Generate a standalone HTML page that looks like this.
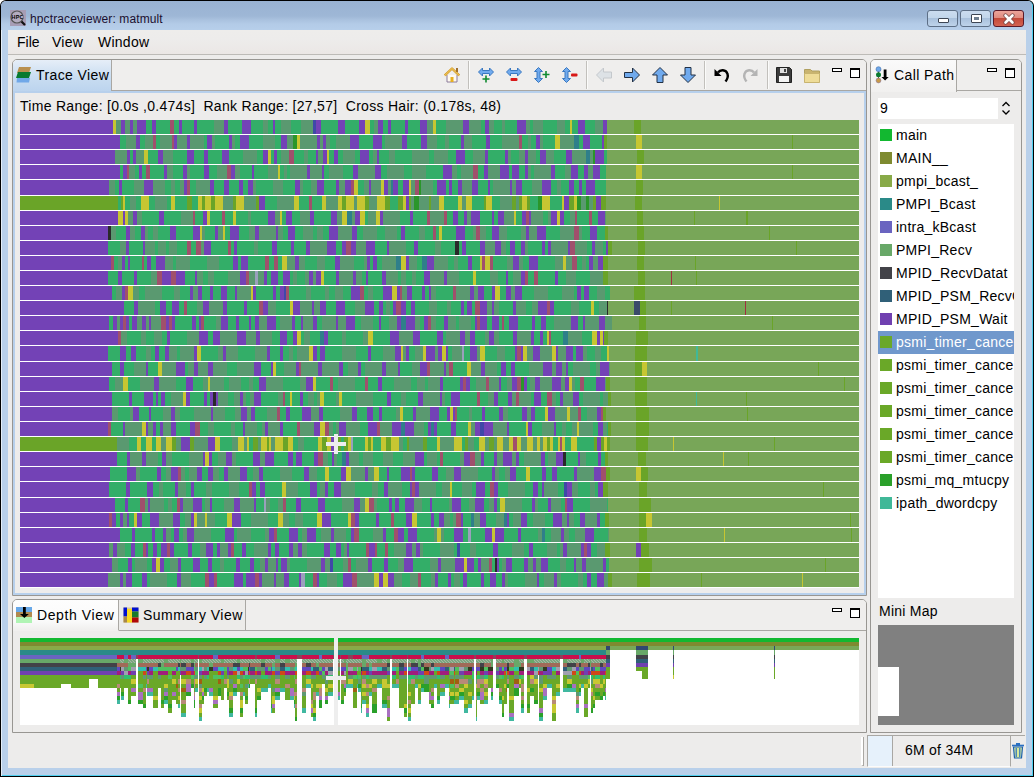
<!DOCTYPE html>
<html><head><meta charset="utf-8">
<style>
*{margin:0;padding:0;box-sizing:border-box}
html,body{width:1034px;height:777px;overflow:hidden;background:#fff}
body{position:relative;font-family:"Liberation Sans",sans-serif;font-size:14px;letter-spacing:0.25px;color:#000}
.a{position:absolute}
.t{position:absolute;white-space:pre;line-height:16px}
svg{display:block}
#win{left:0;top:0;width:1034px;height:777px;background:#000;border-radius:6px 6px 0 0}
#frame{left:1px;top:1px;width:1032px;height:775px;background:#b9d0ea;border-radius:5px 5px 0 0;border-right:1px solid #4fd0f0;border-bottom:1px solid #4fd0f0}
#title{left:1px;top:1px;width:1031px;height:29px;border-radius:5px 5px 0 0;background:linear-gradient(#99b2d2 0px,#9eb7d6 15px,#aac2df 19px,#b3cbe7 23px,#b7cfea 29px)}
#content{left:8px;top:30px;width:1018px;height:738px;background:#edeceb}
#menubar{left:8px;top:30px;width:1018px;height:25px;background:linear-gradient(#eeedeb,#edeceb 40%,#ebe7e5);border-bottom:1px solid #bdbbb7}
.wb{position:absolute;top:10px;height:17px;border:1px solid #5d6f86;border-radius:3px;background:linear-gradient(#cbdcef 0%,#c2d6eb 45%,#a9c1dc 50%,#bed3ea 100%)}
.panel{position:absolute;border:1px solid #989692;border-radius:5px 5px 0 0;background:#edeceb}
.tab{position:absolute;border-right:1px solid #a9a7a3;border-radius:5px 0 0 0}
.sep{position:absolute;top:61px;width:2px;height:28px;border-left:1px solid #c2c0bc;border-right:1px solid #fbfbfa}
.ic{position:absolute;top:67px}
.li{position:absolute;left:880px;width:12px;height:12px}
.lt{position:absolute;left:896px;white-space:pre;line-height:16px}
</style></head><body>
<div id="win" class="a"></div>
<div id="frame" class="a"></div>
<div class="a" style="left:1px;top:8px;width:1px;height:768px;background:#e4eef8"></div>
<div id="title" class="a"></div>
<!-- HPC icon -->
<svg class="a" style="left:10px;top:10px" width="16" height="16" viewBox="0 0 16 16">
<rect x="0" y="0" width="16" height="16" fill="#a79db5"/>
<circle cx="7" cy="7" r="6" fill="#b4acc0" stroke="#555" stroke-width="1.2"/>
<rect x="2" y="5" width="11" height="4" fill="#b4acc0"/>
<text x="1.6" y="9" font-family="Liberation Sans" font-weight="bold" font-size="5.4" fill="#000" letter-spacing="0.2">HPC</text>
<path d="M11.5 11.5l3.5 3.5" stroke="#111" stroke-width="2.2"/>
</svg>
<div class="t" style="left:30px;top:11px;font-size:12px;letter-spacing:0.12px;color:#1c1030">hpctraceviewer: matmult</div>
<div class="wb" style="left:927px;width:31px"><div class="a" style="left:10px;top:7px;width:11px;height:5px;background:#fff;border:1px solid #3d4654;border-radius:1px"></div></div>
<div class="wb" style="left:960px;width:31px"><div class="a" style="left:10px;top:3px;width:11px;height:9px;background:#fff;border:1px solid #3d4654;border-radius:1px"></div><div class="a" style="left:13px;top:6px;width:5px;height:3px;background:#6f7f90"></div></div>
<div class="wb" style="left:993px;width:31px;border-color:#5a1a28;background:linear-gradient(#eca49a 0%,#e08c80 45%,#c44a3a 50%,#d46452 100%)">
<svg class="a" style="left:8px;top:2px" width="14" height="12" viewBox="0 0 14 12"><path d="M3.5 2.5L10.5 9.5M10.5 2.5L3.5 9.5" stroke="#7a4a48" stroke-width="4.2" stroke-linecap="round"/><path d="M3.5 2.5L10.5 9.5M10.5 2.5L3.5 9.5" stroke="#fff" stroke-width="2.6" stroke-linecap="round"/></svg></div>

<div id="content" class="a"></div>
<div id="menubar" class="a"></div>
<div class="t" style="left:17px;top:34px;letter-spacing:0">File</div>
<div class="t" style="left:52px;top:34px">View</div>
<div class="t" style="left:98px;top:34px">Window</div>

<!-- TRACE PANEL -->
<div class="panel" style="left:12px;top:59px;width:855px;height:537px"></div>
<div class="a" style="left:13px;top:60px;width:853px;height:31px;background:#efeeed;border-bottom:1px solid #a9a7a3;border-radius:4px 4px 0 0"></div>
<div class="tab" style="left:13px;top:60px;width:99px;height:31px;background:linear-gradient(#e6eef8,#c9ddf1 55%,#bcd4ee)"></div>
<svg class="a" style="left:16px;top:67px" width="16" height="16" viewBox="0 0 16 16">
<path d="M3 0h12l-2 6H1z" fill="#b89050"/>
<path d="M2 5h13l-2 6H0z" fill="#087a30"/>
<path d="M1 11h13l-1 4.5H0.5z" fill="#70a8e8"/>
</svg>
<div class="t" style="left:36px;top:67px;letter-spacing:0.4px">Trace View</div>
<!-- toolbar -->
<svg class="ic" style="left:444px" width="16" height="16" viewBox="0 0 16 16">
<path d="M3 8v7h10V8" fill="#fffaf0" stroke="#8a7a9a" stroke-width="1"/>
<path d="M0.8 8.5L8 1.5l7.2 7" fill="none" stroke="#d49a20" stroke-width="2.4" stroke-linejoin="round"/>
<path d="M0.8 8.5L8 1.5l7.2 7" fill="none" stroke="#f4d070" stroke-width="1"/>
<rect x="12" y="1" width="2" height="4" fill="#a07030"/>
<rect x="6.5" y="10" width="3" height="5" fill="#e8b020"/>
</svg>
<div class="sep" style="left:468px"></div>
<svg class="ic" style="left:478px" width="16" height="16" viewBox="0 0 16 16">
<path d="M0.5 5L4.5 1v2.5h7V1l4 4-4 4V6.5h-7V9z" fill="#70aaee" stroke="#3a78c0" stroke-width="1"/>
<path d="M8 8.5v7M4.5 12h7" stroke="#108a30" stroke-width="1.6"/>
</svg>
<svg class="ic" style="left:506px" width="16" height="16" viewBox="0 0 16 16">
<path d="M0.5 5L4.5 1v2.5h7V1l4 4-4 4V6.5h-7V9z" fill="#70aaee" stroke="#3a78c0" stroke-width="1"/>
<rect x="4.5" y="11" width="7" height="3" rx="1" fill="#d81818"/>
</svg>
<svg class="ic" style="left:534px" width="16" height="16" viewBox="0 0 16 16">
<path d="M4.5 0.5L8.5 4.5H6v7h2.5l-4 4-4-4H3v-7H0.5z" fill="#70aaee" stroke="#3a78c0" stroke-width="1"/>
<path d="M12 4v7M8.5 7.5h7" stroke="#108a30" stroke-width="1.6"/>
</svg>
<svg class="ic" style="left:562px" width="16" height="16" viewBox="0 0 16 16">
<path d="M4.5 0.5L8.5 4.5H6v7h2.5l-4 4-4-4H3v-7H0.5z" fill="#70aaee" stroke="#3a78c0" stroke-width="1"/>
<rect x="9" y="6.5" width="6.5" height="3" rx="1" fill="#d81818"/>
</svg>
<div class="sep" style="left:586px"></div>
<svg class="ic" style="left:596px" width="16" height="16" viewBox="0 0 16 16">
<path d="M0.5 8L7.5 1v4h8v6h-8v4z" fill="#dde2e6" stroke="#c4c8cc" stroke-width="1"/>
</svg>
<svg class="ic" style="left:624px" width="16" height="16" viewBox="0 0 16 16">
<path d="M15.5 8L8.5 1v4.5h-8v5h8v4.5z" fill="#70aaee" stroke="#223044" stroke-width="1"/>
</svg>
<svg class="ic" style="left:652px" width="16" height="16" viewBox="0 0 16 16">
<path d="M8 0.5L15.5 8H11v7.5H5V8H0.5z" fill="#70aaee" stroke="#223044" stroke-width="1"/>
</svg>
<svg class="ic" style="left:680px" width="16" height="16" viewBox="0 0 16 16">
<path d="M8 15.5L15.5 8H11V0.5H5V8H0.5z" fill="#70aaee" stroke="#223044" stroke-width="1"/>
</svg>
<div class="sep" style="left:704px"></div>
<svg class="ic" style="left:714px" width="16" height="16" viewBox="0 0 16 16">
<path d="M4 5.5c2-3 8-3.5 9.5 1.5c1 3-0.5 5.5-2 7.5" fill="none" stroke="#000" stroke-width="2.4"/>
<path d="M0.5 2v7h7z" fill="#000"/>
</svg>
<svg class="ic" style="left:742px" width="16" height="16" viewBox="0 0 16 16">
<path d="M12 5.5c-2-3-8-3.5-9.5 1.5c-1 3 0.5 5.5 2 7.5" fill="none" stroke="#b4b4b4" stroke-width="2.4"/>
<path d="M15.5 2v7h-7z" fill="#b4b4b4"/>
</svg>
<div class="sep" style="left:767px"></div>
<svg class="ic" style="left:776px" width="16" height="16" viewBox="0 0 16 16">
<path d="M0.5 0.5h13l2 2v13h-15z" fill="#3c3c3c" stroke="#222" stroke-width="1"/>
<rect x="4" y="1" width="7" height="5" fill="#e0e0e0"/><rect x="8" y="2" width="2" height="3" fill="#444"/>
<rect x="3" y="9" width="10" height="6" fill="#f4f4f4"/>
</svg>
<svg class="ic" style="left:804px" width="16" height="16" viewBox="0 0 16 16">
<path d="M0.5 2.5h6l1.5 1.5h7.5v11h-15z" fill="#c9b470" stroke="#b0a060" stroke-width="1"/>
<path d="M0.5 6.5h15v9h-15z" fill="#eedc98" stroke="#c8b470" stroke-width="1"/>
</svg>
<div class="a" style="left:832px;top:68px;width:10px;height:4px;border:1px solid #000;background:#fff"></div>
<div class="a" style="left:850px;top:68px;width:10px;height:10px;border:1px solid #000;border-top-width:2px;background:#fff"></div>

<div class="a" style="left:13px;top:91px;width:853px;height:504px;border:2px solid #b7d0ec;background:#edeceb"></div>
<div class="t" style="left:20px;top:98px;letter-spacing:0.29px">Time Range: [0.0s ,0.474s]  Rank Range: [27,57]  Cross Hair: (0.178s, 48)</div>
<div id="trace" class="a" style="left:20px;top:120px;width:839px;height:468px;background:#fff"><svg width="839" height="468" shape-rendering="crispEdges" style="display:block"><path fill="#7342b6" d="M0 0h89v14h-89zM89 0h4v14h-4zM101 0h4v14h-4zM110 0h3v14h-3zM117 0h9v14h-9zM132 0h4v14h-4zM159 0h3v14h-3zM174 0h3v14h-3zM204 0h4v14h-4zM222 0h9v14h-9zM253 0h2v14h-2zM296 0h5v14h-5zM318 0h7v14h-7zM339 0h6v14h-6zM358 0h5v14h-5zM368 0h3v14h-3zM385 0h3v14h-3zM400 0h7v14h-7zM443 0h6v14h-6zM465 0h4v14h-4zM497 0h9v14h-9zM558 0h7v14h-7zM583 0h4v14h-4zM0 15h96v14h-96zM96 15h4v14h-4zM116 15h4v14h-4zM154 15h3v14h-3zM167 15h3v14h-3zM187 15h5v14h-5zM209 15h3v14h-3zM220 15h9v14h-9zM261 15h6v14h-6zM297 15h3v14h-3zM303 15h3v14h-3zM330 15h9v14h-9zM353 15h9v14h-9zM382 15h5v14h-5zM401 15h6v14h-6zM441 15h3v14h-3zM466 15h4v14h-4zM516 15h4v14h-4zM563 15h7v14h-7zM582 15h2v14h-2zM0 30h89v14h-89zM89 30h6v14h-6zM107 30h3v14h-3zM113 30h3v14h-3zM138 30h5v14h-5zM167 30h7v14h-7zM184 30h4v14h-4zM202 30h7v14h-7zM243 30h5v14h-5zM254 30h3v14h-3zM296 30h2v14h-2zM303 30h4v14h-4zM314 30h4v14h-4zM340 30h9v14h-9zM357 30h2v14h-2zM436 30h9v14h-9zM465 30h3v14h-3zM485 30h3v14h-3zM505 30h3v14h-3zM520 30h6v14h-6zM546 30h6v14h-6zM575 30h9v14h-9zM0 45h97v14h-97zM97 45h3v14h-3zM103 45h4v14h-4zM119 45h3v14h-3zM144 45h3v14h-3zM163 45h4v14h-4zM184 45h5v14h-5zM211 45h4v14h-4zM232 45h2v14h-2zM287 45h3v14h-3zM302 45h2v14h-2zM333 45h5v14h-5zM355 45h6v14h-6zM423 45h9v14h-9zM464 45h4v14h-4zM480 45h9v14h-9zM492 45h7v14h-7zM505 45h3v14h-3zM531 45h4v14h-4zM551 45h7v14h-7zM564 45h4v14h-4zM573 45h7v14h-7zM0 60h89v15h-89zM99 60h3v15h-3zM124 60h9v15h-9zM164 60h3v15h-3zM190 60h4v15h-4zM204 60h5v15h-5zM219 60h4v15h-4zM228 60h5v15h-5zM275 60h5v15h-5zM297 60h7v15h-7zM316 60h3v15h-3zM325 60h6v15h-6zM349 60h2v15h-2zM364 60h4v15h-4zM373 60h5v15h-5zM383 60h6v15h-6zM417 60h9v15h-9zM429 60h3v15h-3zM438 60h4v15h-4zM452 60h6v15h-6zM468 60h2v15h-2zM490 60h2v15h-2zM496 60h6v15h-6zM522 60h9v15h-9zM549 60h5v15h-5zM559 60h3v15h-3zM566 60h9v15h-9zM239 76h6v14h-6zM386 76h3v14h-3zM544 76h5v14h-5zM576 76h5v14h-5zM0 91h98v14h-98zM103 91h2v14h-2zM113 91h4v14h-4zM139 91h5v14h-5zM183 91h4v14h-4zM248 91h7v14h-7zM266 91h6v14h-6zM290 91h4v14h-4zM311 91h6v14h-6zM335 91h5v14h-5zM360 91h3v14h-3zM390 91h3v14h-3zM433 91h5v14h-5zM444 91h3v14h-3zM451 91h9v14h-9zM472 91h2v14h-2zM478 91h6v14h-6zM502 91h4v14h-4zM509 91h2v14h-2zM531 91h6v14h-6zM540 91h4v14h-4zM578 91h7v14h-7zM0 106h88v14h-88zM106 106h4v14h-4zM121 106h4v14h-4zM150 106h6v14h-6zM173 106h7v14h-7zM195 106h3v14h-3zM210 106h9v14h-9zM235 106h4v14h-4zM256 106h2v14h-2zM268 106h7v14h-7zM309 106h9v14h-9zM332 106h5v14h-5zM381 106h4v14h-4zM436 106h9v14h-9zM472 106h7v14h-7zM506 106h3v14h-3zM517 106h9v14h-9zM570 106h7v14h-7zM0 121h88v14h-88zM106 121h3v14h-3zM123 121h2v14h-2zM184 121h7v14h-7zM214 121h3v14h-3zM252 121h5v14h-5zM271 121h3v14h-3zM286 121h4v14h-4zM307 121h9v14h-9zM322 121h4v14h-4zM331 121h5v14h-5zM346 121h9v14h-9zM367 121h2v14h-2zM394 121h4v14h-4zM442 121h4v14h-4zM460 121h5v14h-5zM475 121h6v14h-6zM490 121h5v14h-5zM501 121h4v14h-4zM522 121h3v14h-3zM528 121h3v14h-3zM548 121h2v14h-2zM572 121h3v14h-3zM586 121h2v14h-2zM0 136h88v14h-88zM88 136h3v14h-3zM102 136h3v14h-3zM108 136h2v14h-2zM127 136h4v14h-4zM136 136h9v14h-9zM213 136h5v14h-5zM221 136h7v14h-7zM275 136h4v14h-4zM315 136h5v14h-5zM347 136h3v14h-3zM353 136h4v14h-4zM386 136h3v14h-3zM407 136h7v14h-7zM448 136h4v14h-4zM493 136h6v14h-6zM509 136h9v14h-9zM569 136h4v14h-4zM578 136h5v14h-5zM0 151h88v14h-88zM98 151h4v14h-4zM114 151h3v14h-3zM142 151h9v14h-9zM156 151h9v14h-9zM175 151h2v14h-2zM220 151h6v14h-6zM244 151h3v14h-3zM251 151h7v14h-7zM263 151h7v14h-7zM289 151h4v14h-4zM296 151h5v14h-5zM316 151h3v14h-3zM333 151h3v14h-3zM346 151h2v14h-2zM362 151h4v14h-4zM404 151h6v14h-6zM424 151h3v14h-3zM486 151h2v14h-2zM501 151h4v14h-4zM535 151h3v14h-3zM0 166h88v14h-88zM88 166h4v14h-4zM102 166h3v14h-3zM170 166h3v14h-3zM178 166h4v14h-4zM190 166h3v14h-3zM201 166h6v14h-6zM215 166h2v14h-2zM233 166h3v14h-3zM253 166h3v14h-3zM260 166h4v14h-4zM331 166h9v14h-9zM363 166h9v14h-9zM377 166h3v14h-3zM387 166h5v14h-5zM402 166h3v14h-3zM409 166h2v14h-2zM450 166h4v14h-4zM458 166h6v14h-6zM472 166h3v14h-3zM486 166h5v14h-5zM495 166h7v14h-7zM557 166h4v14h-4zM564 166h5v14h-5zM0 181h104v14h-104zM114 181h4v14h-4zM140 181h6v14h-6zM152 181h7v14h-7zM183 181h6v14h-6zM203 181h4v14h-4zM224 181h3v14h-3zM243 181h5v14h-5zM273 181h7v14h-7zM292 181h2v14h-2zM300 181h6v14h-6zM316 181h9v14h-9zM345 181h9v14h-9zM359 181h4v14h-4zM373 181h3v14h-3zM381 181h5v14h-5zM391 181h4v14h-4zM441 181h3v14h-3zM447 181h5v14h-5zM460 181h7v14h-7zM472 181h2v14h-2zM493 181h3v14h-3zM518 181h9v14h-9zM530 181h4v14h-4zM0 196h89v14h-89zM93 196h4v14h-4zM100 196h3v14h-3zM106 196h3v14h-3zM112 196h5v14h-5zM122 196h4v14h-4zM129 196h2v14h-2zM146 196h3v14h-3zM152 196h3v14h-3zM172 196h4v14h-4zM179 196h2v14h-2zM201 196h7v14h-7zM216 196h3v14h-3zM229 196h2v14h-2zM235 196h4v14h-4zM247 196h9v14h-9zM272 196h3v14h-3zM281 196h2v14h-2zM293 196h4v14h-4zM316 196h2v14h-2zM326 196h9v14h-9zM359 196h2v14h-2zM377 196h4v14h-4zM386 196h9v14h-9zM404 196h4v14h-4zM424 196h4v14h-4zM455 196h2v14h-2zM460 196h7v14h-7zM472 196h7v14h-7zM489 196h9v14h-9zM512 196h3v14h-3zM521 196h5v14h-5zM551 196h7v14h-7zM563 196h2v14h-2zM579 196h6v14h-6zM0 211h89v14h-89zM89 211h9v14h-9zM147 211h3v14h-3zM179 211h9v14h-9zM193 211h7v14h-7zM217 211h9v14h-9zM236 211h4v14h-4zM260 211h7v14h-7zM273 211h4v14h-4zM304 211h4v14h-4zM370 211h9v14h-9zM393 211h7v14h-7zM417 211h6v14h-6zM440 211h5v14h-5zM450 211h5v14h-5zM469 211h5v14h-5zM493 211h4v14h-4zM511 211h3v14h-3zM520 211h3v14h-3zM577 211h3v14h-3zM583 211h1v14h-1zM0 226h88v15h-88zM100 226h6v15h-6zM111 226h5v15h-5zM135 226h4v15h-4zM145 226h4v15h-4zM174 226h3v15h-3zM203 226h3v15h-3zM247 226h3v15h-3zM260 226h3v15h-3zM293 226h4v15h-4zM300 226h5v15h-5zM348 226h3v15h-3zM375 226h6v15h-6zM386 226h3v15h-3zM406 226h9v15h-9zM418 226h4v15h-4zM426 226h2v15h-2zM450 226h7v15h-7zM495 226h2v15h-2zM501 226h2v15h-2zM513 226h7v15h-7zM536 226h2v15h-2zM546 226h7v15h-7zM556 226h7v15h-7zM0 242h88v14h-88zM88 242h4v14h-4zM100 242h4v14h-4zM126 242h2v14h-2zM156 242h9v14h-9zM174 242h4v14h-4zM188 242h5v14h-5zM234 242h7v14h-7zM251 242h2v14h-2zM276 242h3v14h-3zM298 242h4v14h-4zM319 242h4v14h-4zM338 242h3v14h-3zM362 242h4v14h-4zM378 242h2v14h-2zM400 242h7v14h-7zM424 242h2v14h-2zM461 242h4v14h-4zM481 242h5v14h-5zM491 242h4v14h-4zM523 242h9v14h-9zM536 242h6v14h-6zM546 242h2v14h-2zM580 242h9v14h-9zM0 257h89v14h-89zM134 257h5v14h-5zM166 257h7v14h-7zM239 257h7v14h-7zM286 257h7v14h-7zM358 257h4v14h-4zM420 257h3v14h-3zM440 257h3v14h-3zM446 257h4v14h-4zM479 257h2v14h-2zM492 257h5v14h-5zM504 257h3v14h-3zM515 257h5v14h-5zM532 257h9v14h-9zM545 257h4v14h-4zM576 257h9v14h-9zM0 272h89v14h-89zM89 272h3v14h-3zM109 272h3v14h-3zM124 272h9v14h-9zM136 272h2v14h-2zM141 272h4v14h-4zM166 272h4v14h-4zM184 272h3v14h-3zM190 272h3v14h-3zM196 272h2v14h-2zM220 272h3v14h-3zM234 272h7v14h-7zM280 272h3v14h-3zM367 272h4v14h-4zM398 272h5v14h-5zM420 272h2v14h-2zM431 272h9v14h-9zM474 272h4v14h-4zM488 272h4v14h-4zM514 272h7v14h-7zM540 272h3v14h-3zM553 272h6v14h-6zM0 287h88v14h-88zM88 287h4v14h-4zM113 287h6v14h-6zM129 287h2v14h-2zM151 287h4v14h-4zM191 287h2v14h-2zM221 287h6v14h-6zM231 287h4v14h-4zM266 287h4v14h-4zM282 287h9v14h-9zM299 287h4v14h-4zM332 287h5v14h-5zM347 287h6v14h-6zM359 287h3v14h-3zM393 287h3v14h-3zM410 287h9v14h-9zM427 287h3v14h-3zM433 287h2v14h-2zM462 287h3v14h-3zM479 287h4v14h-4zM502 287h5v14h-5zM511 287h4v14h-4zM528 287h7v14h-7zM577 287h4v14h-4zM0 302h88v14h-88zM103 302h2v14h-2zM126 302h2v14h-2zM133 302h3v14h-3zM140 302h3v14h-3zM151 302h5v14h-5zM170 302h5v14h-5zM223 302h2v14h-2zM245 302h3v14h-3zM260 302h3v14h-3zM294 302h6v14h-6zM319 302h7v14h-7zM348 302h9v14h-9zM372 302h9v14h-9zM385 302h9v14h-9zM408 302h3v14h-3zM414 302h3v14h-3zM431 302h5v14h-5zM455 302h5v14h-5zM464 302h9v14h-9zM487 302h2v14h-2zM508 302h4v14h-4zM534 302h2v14h-2zM578 302h5v14h-5zM161 317h9v14h-9zM188 317h7v14h-7zM311 317h5v14h-5zM577 317h4v14h-4zM0 332h97v14h-97zM107 332h3v14h-3zM122 332h4v14h-4zM142 332h4v14h-4zM183 332h2v14h-2zM189 332h3v14h-3zM206 332h6v14h-6zM233 332h7v14h-7zM245 332h9v14h-9zM268 332h5v14h-5zM276 332h6v14h-6zM294 332h4v14h-4zM312 332h2v14h-2zM326 332h3v14h-3zM395 332h9v14h-9zM444 332h6v14h-6zM461 332h3v14h-3zM474 332h3v14h-3zM483 332h9v14h-9zM496 332h3v14h-3zM521 332h4v14h-4zM536 332h7v14h-7zM558 332h2v14h-2zM578 332h3v14h-3zM0 347h90v14h-90zM107 347h9v14h-9zM137 347h4v14h-4zM151 347h7v14h-7zM177 347h5v14h-5zM188 347h5v14h-5zM204 347h4v14h-4zM220 347h7v14h-7zM239 347h4v14h-4zM284 347h5v14h-5zM321 347h5v14h-5zM345 347h3v14h-3zM367 347h2v14h-2zM381 347h9v14h-9zM392 347h3v14h-3zM412 347h6v14h-6zM434 347h7v14h-7zM472 347h3v14h-3zM490 347h6v14h-6zM522 347h4v14h-4zM532 347h5v14h-5zM554 347h3v14h-3zM574 347h7v14h-7zM0 362h89v15h-89zM106 362h4v15h-4zM127 362h6v15h-6zM155 362h3v15h-3zM171 362h3v15h-3zM232 362h4v15h-4zM240 362h5v15h-5zM290 362h7v15h-7zM305 362h3v15h-3zM314 362h7v15h-7zM364 362h4v15h-4zM390 362h2v15h-2zM395 362h4v15h-4zM456 362h9v15h-9zM474 362h4v15h-4zM513 362h5v15h-5zM522 362h2v15h-2zM547 362h5v15h-5zM578 362h5v15h-5zM0 378h88v14h-88zM88 378h7v14h-7zM105 378h3v14h-3zM128 378h2v14h-2zM160 378h3v14h-3zM173 378h9v14h-9zM190 378h2v14h-2zM214 378h6v14h-6zM234 378h2v14h-2zM276 378h5v14h-5zM298 378h7v14h-7zM334 378h6v14h-6zM369 378h3v14h-3zM375 378h4v14h-4zM385 378h9v14h-9zM410 378h2v14h-2zM432 378h9v14h-9zM455 378h9v14h-9zM474 378h3v14h-3zM512 378h3v14h-3zM528 378h3v14h-3zM547 378h6v14h-6zM0 393h89v14h-89zM92 393h4v14h-4zM100 393h3v14h-3zM107 393h2v14h-2zM117 393h5v14h-5zM130 393h9v14h-9zM153 393h7v14h-7zM171 393h3v14h-3zM212 393h9v14h-9zM302 393h9v14h-9zM335 393h4v14h-4zM356 393h3v14h-3zM386 393h6v14h-6zM411 393h3v14h-3zM419 393h5v14h-5zM441 393h2v14h-2zM460 393h6v14h-6zM487 393h2v14h-2zM501 393h6v14h-6zM533 393h9v14h-9zM547 393h2v14h-2zM560 393h5v14h-5zM577 393h3v14h-3zM0 408h97v14h-97zM97 408h3v14h-3zM112 408h3v14h-3zM132 408h3v14h-3zM143 408h3v14h-3zM154 408h5v14h-5zM167 408h7v14h-7zM205 408h9v14h-9zM249 408h5v14h-5zM269 408h9v14h-9zM287 408h9v14h-9zM311 408h3v14h-3zM331 408h3v14h-3zM363 408h3v14h-3zM378 408h6v14h-6zM388 408h9v14h-9zM434 408h9v14h-9zM465 408h7v14h-7zM475 408h9v14h-9zM498 408h3v14h-3zM541 408h3v14h-3zM565 408h9v14h-9zM0 423h89v14h-89zM93 423h4v14h-4zM111 423h4v14h-4zM126 423h2v14h-2zM133 423h4v14h-4zM141 423h6v14h-6zM150 423h4v14h-4zM168 423h4v14h-4zM186 423h7v14h-7zM197 423h3v14h-3zM208 423h3v14h-3zM222 423h4v14h-4zM248 423h3v14h-3zM255 423h4v14h-4zM269 423h4v14h-4zM278 423h4v14h-4zM304 423h6v14h-6zM316 423h5v14h-5zM327 423h2v14h-2zM349 423h6v14h-6zM386 423h6v14h-6zM396 423h4v14h-4zM473 423h5v14h-5zM509 423h4v14h-4zM543 423h4v14h-4zM561 423h3v14h-3zM567 423h4v14h-4zM0 438h89v14h-89zM89 438h3v14h-3zM108 438h4v14h-4zM132 438h4v14h-4zM140 438h4v14h-4zM158 438h3v14h-3zM173 438h7v14h-7zM188 438h4v14h-4zM216 438h4v14h-4zM230 438h4v14h-4zM245 438h3v14h-3zM256 438h2v14h-2zM261 438h6v14h-6zM301 438h4v14h-4zM348 438h4v14h-4zM364 438h4v14h-4zM384 438h9v14h-9zM418 438h3v14h-3zM435 438h9v14h-9zM447 438h7v14h-7zM458 438h3v14h-3zM477 438h2v14h-2zM486 438h6v14h-6zM504 438h4v14h-4zM513 438h3v14h-3zM521 438h7v14h-7zM554 438h2v14h-2zM562 438h4v14h-4zM583 438h3v14h-3zM0 453h88v14h-88zM100 453h3v14h-3zM106 453h6v14h-6zM122 453h5v14h-5zM157 453h4v14h-4zM189 453h5v14h-5zM214 453h9v14h-9zM226 453h9v14h-9zM239 453h3v14h-3zM254 453h2v14h-2zM264 453h5v14h-5zM279 453h2v14h-2zM297 453h2v14h-2zM323 453h9v14h-9zM359 453h4v14h-4zM368 453h6v14h-6zM415 453h3v14h-3zM428 453h3v14h-3zM443 453h4v14h-4zM461 453h3v14h-3zM470 453h6v14h-6zM482 453h3v14h-3zM517 453h2v14h-2zM534 453h3v14h-3zM567 453h4v14h-4zM577 453h7v14h-7z"/><path fill="#c6c632" d="M93 0h3v14h-3zM345 0h5v14h-5zM413 0h3v14h-3zM550 0h2v14h-2zM277 15h3v14h-3zM535 15h5v14h-5zM124 30h4v14h-4zM248 30h3v14h-3zM307 30h2v14h-2zM258 45h2v14h-2zM334 60h4v15h-4zM361 60h3v15h-3zM389 60h2v15h-2zM103 76h2v14h-2zM121 76h8v14h-8zM151 76h4v14h-4zM178 76h4v14h-4zM185 76h6v14h-6zM195 76h8v14h-8zM216 76h8v14h-8zM274 76h5v14h-5zM302 76h4v14h-4zM318 76h4v14h-4zM326 76h8v14h-8zM337 76h8v14h-8zM357 76h8v14h-8zM383 76h3v14h-3zM419 76h5v14h-5zM438 76h4v14h-4zM446 76h6v14h-6zM466 76h6v14h-6zM502 76h5v14h-5zM522 76h8v14h-8zM542 76h2v14h-2zM554 76h3v14h-3zM98 91h5v14h-5zM105 91h3v14h-3zM187 91h3v14h-3zM213 91h3v14h-3zM260 91h2v14h-2zM322 91h5v14h-5zM340 91h5v14h-5zM356 91h4v14h-4zM494 91h2v14h-2zM537 91h3v14h-3zM180 106h2v14h-2zM203 106h2v14h-2zM419 106h3v14h-3zM262 136h5v14h-5zM381 136h5v14h-5zM460 136h2v14h-2zM465 136h5v14h-5zM543 136h3v14h-3zM301 151h3v14h-3zM453 151h3v14h-3zM108 166h5v14h-5zM231 166h2v14h-2zM372 166h5v14h-5zM475 166h5v14h-5zM270 181h3v14h-3zM571 181h3v14h-3zM277 211h4v14h-4zM348 211h5v14h-5zM527 211h2v14h-2zM572 211h5v14h-5zM580 211h3v14h-3zM177 226h4v15h-4zM289 226h4v15h-4zM381 226h2v15h-2zM403 226h3v15h-3zM422 226h4v15h-4zM460 226h5v15h-5zM503 226h4v15h-4zM532 226h4v15h-4zM587 226h2v15h-2zM138 242h4v14h-4zM253 242h3v14h-3zM447 242h4v14h-4zM103 257h5v14h-5zM188 257h2v14h-2zM293 257h3v14h-3zM549 257h3v14h-3zM163 272h3v14h-3zM270 272h2v14h-2zM300 272h4v14h-4zM319 272h3v14h-3zM380 287h3v14h-3zM430 287h3v14h-3zM525 287h3v14h-3zM547 287h3v14h-3zM122 302h4v14h-4zM300 302h5v14h-5zM448 302h3v14h-3zM506 302h2v14h-2zM557 302h2v14h-2zM117 317h4v14h-4zM126 317h6v14h-6zM136 317h5v14h-5zM146 317h6v14h-6zM195 317h5v14h-5zM218 317h6v14h-6zM227 317h2v14h-2zM241 317h6v14h-6zM249 317h2v14h-2zM255 317h8v14h-8zM268 317h5v14h-5zM298 317h4v14h-4zM307 317h4v14h-4zM328 317h3v14h-3zM345 317h3v14h-3zM351 317h2v14h-2zM361 317h5v14h-5zM371 317h8v14h-8zM417 317h3v14h-3zM434 317h8v14h-8zM459 317h6v14h-6zM477 317h6v14h-6zM489 317h4v14h-4zM497 317h4v14h-4zM507 317h6v14h-6zM517 317h3v14h-3zM523 317h4v14h-4zM530 317h3v14h-3zM538 317h2v14h-2zM542 317h3v14h-3zM551 317h6v14h-6zM584 317h3v14h-3zM185 332h4v14h-4zM305 347h4v14h-4zM326 347h5v14h-5zM354 347h5v14h-5zM506 347h4v14h-4zM262 362h4v15h-4zM430 362h2v15h-2zM345 378h4v14h-4zM480 378h5v14h-5zM114 393h3v14h-3zM174 393h3v14h-3zM185 393h2v14h-2zM207 393h5v14h-5zM258 393h5v14h-5zM297 393h5v14h-5zM328 393h3v14h-3zM392 393h5v14h-5zM417 408h4v14h-4zM472 408h3v14h-3zM136 438h4v14h-4zM444 438h3v14h-3zM354 453h5v14h-5zM363 453h5v14h-5z"/><path fill="#5a9970" d="M96 0h5v14h-5zM105 0h5v14h-5zM113 0h4v14h-4zM194 0h10v14h-10zM243 0h5v14h-5zM261 0h10v14h-10zM281 0h12v14h-12zM354 0h4v14h-4zM407 0h6v14h-6zM426 0h17v14h-17zM449 0h12v14h-12zM469 0h5v14h-5zM482 0h3v14h-3zM506 0h4v14h-4zM513 0h10v14h-10zM537 0h8v14h-8zM575 0h8v14h-8zM106 15h10v14h-10zM125 15h8v14h-8zM140 15h12v14h-12zM157 15h10v14h-10zM170 15h14v14h-14zM192 15h3v14h-3zM212 15h3v14h-3zM243 15h12v14h-12zM267 15h6v14h-6zM280 15h17v14h-17zM300 15h3v14h-3zM306 15h4v14h-4zM316 15h14v14h-14zM365 15h17v14h-17zM407 15h10v14h-10zM425 15h4v14h-4zM444 15h8v14h-8zM482 15h17v14h-17zM508 15h3v14h-3zM520 15h3v14h-3zM540 15h14v14h-14zM95 30h12v14h-12zM116 30h8v14h-8zM143 30h10v14h-10zM223 30h14v14h-14zM261 30h8v14h-8zM284 30h4v14h-4zM298 30h5v14h-5zM323 30h12v14h-12zM353 30h4v14h-4zM369 30h6v14h-6zM392 30h17v14h-17zM414 30h14v14h-14zM453 30h12v14h-12zM488 30h3v14h-3zM499 30h6v14h-6zM508 30h8v14h-8zM526 30h8v14h-8zM552 30h14v14h-14zM570 30h3v14h-3zM109 45h6v14h-6zM147 45h6v14h-6zM167 45h3v14h-3zM197 45h10v14h-10zM215 45h5v14h-5zM248 45h10v14h-10zM264 45h3v14h-3zM270 45h17v14h-17zM290 45h12v14h-12zM309 45h14v14h-14zM338 45h17v14h-17zM367 45h17v14h-17zM392 45h14v14h-14zM432 45h5v14h-5zM441 45h12v14h-12zM468 45h12v14h-12zM508 45h3v14h-3zM514 45h17v14h-17zM545 45h6v14h-6zM568 45h5v14h-5zM89 60h6v15h-6zM114 60h10v15h-10zM133 60h12v15h-12zM151 60h4v15h-4zM160 60h4v15h-4zM176 60h14v15h-14zM233 60h3v15h-3zM253 60h10v15h-10zM280 60h3v15h-3zM291 60h6v15h-6zM319 60h6v15h-6zM344 60h5v15h-5zM351 60h10v15h-10zM368 60h3v15h-3zM391 60h4v15h-4zM401 60h12v15h-12zM442 60h10v15h-10zM473 60h17v15h-17zM492 60h4v15h-4zM512 60h10v15h-10zM537 60h4v15h-4zM110 76h6v14h-6zM135 76h12v14h-12zM203 76h10v14h-10zM224 76h12v14h-12zM257 76h17v14h-17zM306 76h12v14h-12zM334 76h3v14h-3zM349 76h8v14h-8zM391 76h3v14h-3zM399 76h10v14h-10zM411 76h8v14h-8zM442 76h4v14h-4zM480 76h12v14h-12zM496 76h3v14h-3zM561 76h5v14h-5zM569 76h4v14h-4zM108 91h5v14h-5zM117 91h5v14h-5zM161 91h12v14h-12zM228 91h3v14h-3zM255 91h5v14h-5zM280 91h10v14h-10zM317 91h5v14h-5zM332 91h3v14h-3zM348 91h8v14h-8zM363 91h17v14h-17zM410 91h14v14h-14zM447 91h4v14h-4zM484 91h10v14h-10zM511 91h12v14h-12zM528 91h3v14h-3zM550 91h5v14h-5zM585 91h1v14h-1zM91 106h5v14h-5zM110 106h5v14h-5zM125 106h3v14h-3zM133 106h5v14h-5zM182 106h3v14h-3zM198 106h5v14h-5zM229 106h6v14h-6zM239 106h17v14h-17zM258 106h5v14h-5zM283 106h10v14h-10zM297 106h6v14h-6zM318 106h14v14h-14zM343 106h14v14h-14zM365 106h12v14h-12zM399 106h6v14h-6zM453 106h3v14h-3zM460 106h6v14h-6zM479 106h8v14h-8zM501 106h5v14h-5zM509 106h8v14h-8zM540 106h14v14h-14zM559 106h3v14h-3zM100 121h6v14h-6zM125 121h10v14h-10zM138 121h8v14h-8zM149 121h8v14h-8zM181 121h3v14h-3zM234 121h4v14h-4zM290 121h17v14h-17zM336 121h10v14h-10zM369 121h17v14h-17zM415 121h6v14h-6zM465 121h10v14h-10zM481 121h5v14h-5zM505 121h3v14h-3zM531 121h17v14h-17zM555 121h12v14h-12zM575 121h8v14h-8zM98 136h4v14h-4zM145 136h8v14h-8zM156 136h14v14h-14zM187 136h12v14h-12zM267 136h8v14h-8zM279 136h6v14h-6zM297 136h8v14h-8zM320 136h14v14h-14zM344 136h3v14h-3zM362 136h14v14h-14zM389 136h8v14h-8zM414 136h14v14h-14zM434 136h4v14h-4zM487 136h6v14h-6zM499 136h4v14h-4zM535 136h8v14h-8zM546 136h6v14h-6zM562 136h4v14h-4zM573 136h5v14h-5zM131 151h6v14h-6zM177 151h6v14h-6zM188 151h6v14h-6zM208 151h12v14h-12zM229 151h6v14h-6zM238 151h6v14h-6zM273 151h4v14h-4zM285 151h4v14h-4zM293 151h3v14h-3zM319 151h14v14h-14zM336 151h6v14h-6zM366 151h12v14h-12zM381 151h5v14h-5zM392 151h4v14h-4zM410 151h14v14h-14zM427 151h12v14h-12zM470 151h8v14h-8zM493 151h8v14h-8zM546 151h10v14h-10zM570 151h13v14h-13zM96 166h6v14h-6zM113 166h6v14h-6zM125 166h17v14h-17zM154 166h6v14h-6zM173 166h5v14h-5zM217 166h14v14h-14zM286 166h5v14h-5zM305 166h4v14h-4zM315 166h8v14h-8zM348 166h5v14h-5zM382 166h5v14h-5zM411 166h5v14h-5zM436 166h14v14h-14zM454 166h4v14h-4zM491 166h4v14h-4zM514 166h14v14h-14zM542 166h12v14h-12zM577 166h8v14h-8zM118 181h17v14h-17zM177 181h6v14h-6zM189 181h14v14h-14zM248 181h8v14h-8zM280 181h12v14h-12zM294 181h6v14h-6zM335 181h10v14h-10zM366 181h4v14h-4zM409 181h8v14h-8zM427 181h4v14h-4zM467 181h5v14h-5zM474 181h5v14h-5zM496 181h10v14h-10zM512 181h6v14h-6zM551 181h8v14h-8zM579 181h8v14h-8zM97 196h3v14h-3zM117 196h5v14h-5zM126 196h3v14h-3zM131 196h10v14h-10zM196 196h5v14h-5zM239 196h8v14h-8zM260 196h12v14h-12zM283 196h10v14h-10zM302 196h14v14h-14zM318 196h8v14h-8zM341 196h12v14h-12zM369 196h8v14h-8zM395 196h5v14h-5zM411 196h5v14h-5zM428 196h8v14h-8zM439 196h12v14h-12zM534 196h17v14h-17zM565 196h14v14h-14zM585 196h7v14h-7zM101 211h6v14h-6zM121 211h5v14h-5zM134 211h8v14h-8zM167 211h12v14h-12zM200 211h17v14h-17zM226 211h10v14h-10zM240 211h12v14h-12zM284 211h6v14h-6zM322 211h4v14h-4zM343 211h5v14h-5zM379 211h14v14h-14zM426 211h14v14h-14zM445 211h5v14h-5zM465 211h4v14h-4zM474 211h5v14h-5zM497 211h14v14h-14zM548 211h14v14h-14zM126 226h5v15h-5zM149 226h8v15h-8zM160 226h14v15h-14zM198 226h5v15h-5zM206 226h12v15h-12zM235 226h12v15h-12zM269 226h4v15h-4zM277 226h12v15h-12zM322 226h14v15h-14zM363 226h12v15h-12zM383 226h3v15h-3zM395 226h8v15h-8zM415 226h3v15h-3zM432 226h10v15h-10zM457 226h3v15h-3zM477 226h8v15h-8zM507 226h6v15h-6zM520 226h12v15h-12zM538 226h8v15h-8zM563 226h4v15h-4zM575 226h6v15h-6zM114 242h12v14h-12zM142 242h14v14h-14zM168 242h6v14h-6zM178 242h10v14h-10zM193 242h14v14h-14zM217 242h17v14h-17zM264 242h12v14h-12zM281 242h17v14h-17zM302 242h17v14h-17zM328 242h10v14h-10zM345 242h17v14h-17zM366 242h12v14h-12zM392 242h8v14h-8zM410 242h14v14h-14zM426 242h3v14h-3zM451 242h10v14h-10zM465 242h12v14h-12zM509 242h14v14h-14zM532 242h4v14h-4zM542 242h4v14h-4zM553 242h17v14h-17zM576 242h4v14h-4zM589 242h1v14h-1zM95 257h8v14h-8zM120 257h14v14h-14zM139 257h17v14h-17zM183 257h5v14h-5zM190 257h14v14h-14zM209 257h12v14h-12zM229 257h4v14h-4zM246 257h17v14h-17zM280 257h6v14h-6zM318 257h17v14h-17zM374 257h17v14h-17zM397 257h8v14h-8zM408 257h12v14h-12zM456 257h10v14h-10zM469 257h10v14h-10zM487 257h5v14h-5zM510 257h5v14h-5zM520 257h12v14h-12zM541 257h4v14h-4zM552 257h3v14h-3zM585 257h1v14h-1zM151 272h12v14h-12zM198 272h10v14h-10zM214 272h6v14h-6zM223 272h3v14h-3zM230 272h4v14h-4zM258 272h5v14h-5zM288 272h6v14h-6zM297 272h3v14h-3zM316 272h3v14h-3zM336 272h17v14h-17zM381 272h5v14h-5zM403 272h17v14h-17zM422 272h3v14h-3zM468 272h6v14h-6zM492 272h4v14h-4zM499 272h12v14h-12zM532 272h4v14h-4zM543 272h10v14h-10zM563 272h17v14h-17zM583 272h5v14h-5zM92 287h6v14h-6zM110 287h3v14h-3zM143 287h8v14h-8zM155 287h5v14h-5zM174 287h17v14h-17zM193 287h12v14h-12zM215 287h6v14h-6zM227 287h4v14h-4zM247 287h10v14h-10zM291 287h8v14h-8zM320 287h12v14h-12zM376 287h4v14h-4zM396 287h14v14h-14zM449 287h3v14h-3zM483 287h5v14h-5zM507 287h4v14h-4zM535 287h12v14h-12zM550 287h8v14h-8zM567 287h10v14h-10zM105 302h17v14h-17zM128 302h5v14h-5zM143 302h8v14h-8zM188 302h6v14h-6zM211 302h4v14h-4zM225 302h12v14h-12zM242 302h3v14h-3zM248 302h12v14h-12zM280 302h14v14h-14zM309 302h4v14h-4zM316 302h3v14h-3zM326 302h14v14h-14zM360 302h12v14h-12zM394 302h10v14h-10zM451 302h4v14h-4zM473 302h14v14h-14zM522 302h12v14h-12zM542 302h4v14h-4zM552 302h5v14h-5zM559 302h14v14h-14zM583 302h4v14h-4zM97 317h12v14h-12zM141 317h5v14h-5zM156 317h5v14h-5zM174 317h14v14h-14zM212 317h6v14h-6zM224 317h3v14h-3zM238 317h3v14h-3zM251 317h4v14h-4zM278 317h6v14h-6zM379 317h4v14h-4zM389 317h14v14h-14zM420 317h14v14h-14zM448 317h6v14h-6zM465 317h4v14h-4zM474 317h3v14h-3zM483 317h6v14h-6zM501 317h6v14h-6zM513 317h4v14h-4zM520 317h3v14h-3zM110 332h12v14h-12zM126 332h12v14h-12zM146 332h6v14h-6zM169 332h14v14h-14zM198 332h8v14h-8zM212 332h4v14h-4zM240 332h5v14h-5zM303 332h5v14h-5zM314 332h3v14h-3zM329 332h10v14h-10zM343 332h10v14h-10zM363 332h10v14h-10zM383 332h12v14h-12zM407 332h10v14h-10zM440 332h4v14h-4zM455 332h6v14h-6zM477 332h6v14h-6zM492 332h4v14h-4zM504 332h17v14h-17zM528 332h8v14h-8zM560 332h6v14h-6zM116 347h4v14h-4zM146 347h5v14h-5zM161 347h4v14h-4zM169 347h8v14h-8zM193 347h6v14h-6zM208 347h12v14h-12zM233 347h6v14h-6zM260 347h12v14h-12zM289 347h8v14h-8zM331 347h14v14h-14zM348 347h6v14h-6zM426 347h8v14h-8zM441 347h17v14h-17zM475 347h4v14h-4zM485 347h5v14h-5zM557 347h17v14h-17zM139 362h4v15h-4zM158 362h8v15h-8zM186 362h6v15h-6zM209 362h10v15h-10zM266 362h12v15h-12zM300 362h5v15h-5zM321 362h14v15h-14zM352 362h6v15h-6zM368 362h14v15h-14zM399 362h17v15h-17zM422 362h8v15h-8zM442 362h10v15h-10zM488 362h17v15h-17zM524 362h14v15h-14zM552 362h6v15h-6zM570 362h5v15h-5zM125 378h3v14h-3zM130 378h14v14h-14zM148 378h4v14h-4zM163 378h10v14h-10zM185 378h5v14h-5zM204 378h10v14h-10zM220 378h14v14h-14zM246 378h4v14h-4zM258 378h5v14h-5zM322 378h12v14h-12zM340 378h5v14h-5zM354 378h3v14h-3zM394 378h8v14h-8zM429 378h3v14h-3zM449 378h6v14h-6zM469 378h5v14h-5zM485 378h17v14h-17zM515 378h3v14h-3zM531 378h10v14h-10zM570 378h17v14h-17zM103 393h4v14h-4zM139 393h14v14h-14zM165 393h6v14h-6zM177 393h8v14h-8zM187 393h8v14h-8zM231 393h17v14h-17zM263 393h6v14h-6zM275 393h8v14h-8zM424 393h6v14h-6zM433 393h3v14h-3zM454 393h6v14h-6zM476 393h8v14h-8zM493 393h8v14h-8zM513 393h12v14h-12zM542 393h5v14h-5zM549 393h5v14h-5zM565 393h12v14h-12zM146 408h5v14h-5zM163 408h4v14h-4zM174 408h17v14h-17zM217 408h14v14h-14zM245 408h4v14h-4zM282 408h5v14h-5zM301 408h10v14h-10zM314 408h12v14h-12zM353 408h10v14h-10zM414 408h3v14h-3zM421 408h3v14h-3zM518 408h4v14h-4zM531 408h10v14h-10zM544 408h5v14h-5zM555 408h10v14h-10zM588 408h1v14h-1zM89 423h4v14h-4zM97 423h8v14h-8zM180 423h6v14h-6zM200 423h8v14h-8zM234 423h14v14h-14zM273 423h5v14h-5zM282 423h5v14h-5zM324 423h3v14h-3zM374 423h12v14h-12zM392 423h4v14h-4zM400 423h3v14h-3zM420 423h14v14h-14zM450 423h6v14h-6zM492 423h12v14h-12zM527 423h10v14h-10zM540 423h3v14h-3zM547 423h14v14h-14zM577 423h8v14h-8zM92 438h6v14h-6zM115 438h12v14h-12zM150 438h8v14h-8zM200 438h4v14h-4zM240 438h5v14h-5zM248 438h8v14h-8zM267 438h3v14h-3zM287 438h14v14h-14zM305 438h5v14h-5zM323 438h5v14h-5zM336 438h12v14h-12zM378 438h6v14h-6zM410 438h8v14h-8zM421 438h14v14h-14zM461 438h8v14h-8zM482 438h4v14h-4zM508 438h5v14h-5zM516 438h5v14h-5zM540 438h6v14h-6zM556 438h6v14h-6zM566 438h17v14h-17zM88 453h12v14h-12zM103 453h3v14h-3zM130 453h17v14h-17zM161 453h10v14h-10zM242 453h12v14h-12zM256 453h8v14h-8zM307 453h10v14h-10zM337 453h17v14h-17zM374 453h8v14h-8zM390 453h8v14h-8zM411 453h4v14h-4zM434 453h6v14h-6zM485 453h3v14h-3zM505 453h12v14h-12zM524 453h10v14h-10zM537 453h4v14h-4zM558 453h5v14h-5zM584 453h4v14h-4z"/><path fill="#33ae68" d="M126 0h6v14h-6zM136 0h14v14h-14zM154 0h5v14h-5zM162 0h12v14h-12zM177 0h17v14h-17zM208 0h14v14h-14zM231 0h12v14h-12zM248 0h5v14h-5zM255 0h6v14h-6zM271 0h10v14h-10zM301 0h17v14h-17zM325 0h14v14h-14zM350 0h4v14h-4zM363 0h5v14h-5zM371 0h14v14h-14zM388 0h12v14h-12zM416 0h10v14h-10zM461 0h4v14h-4zM474 0h8v14h-8zM485 0h12v14h-12zM510 0h3v14h-3zM523 0h14v14h-14zM545 0h5v14h-5zM552 0h6v14h-6zM565 0h10v14h-10zM100 15h6v14h-6zM120 15h5v14h-5zM136 15h4v14h-4zM184 15h3v14h-3zM195 15h14v14h-14zM215 15h5v14h-5zM229 15h14v14h-14zM255 15h6v14h-6zM310 15h6v14h-6zM339 15h14v14h-14zM362 15h3v14h-3zM387 15h14v14h-14zM417 15h8v14h-8zM429 15h12v14h-12zM452 15h14v14h-14zM470 15h12v14h-12zM502 15h6v14h-6zM511 15h5v14h-5zM523 15h12v14h-12zM559 15h4v14h-4zM570 15h12v14h-12zM110 30h3v14h-3zM128 30h10v14h-10zM153 30h14v14h-14zM174 30h10v14h-10zM188 30h14v14h-14zM209 30h14v14h-14zM237 30h6v14h-6zM251 30h3v14h-3zM257 30h4v14h-4zM274 30h10v14h-10zM288 30h8v14h-8zM309 30h5v14h-5zM318 30h5v14h-5zM335 30h5v14h-5zM349 30h4v14h-4zM359 30h10v14h-10zM375 30h17v14h-17zM409 30h5v14h-5zM428 30h8v14h-8zM445 30h8v14h-8zM468 30h17v14h-17zM491 30h8v14h-8zM516 30h4v14h-4zM534 30h12v14h-12zM584 30h3v14h-3zM100 45h3v14h-3zM115 45h4v14h-4zM122 45h4v14h-4zM130 45h14v14h-14zM153 45h10v14h-10zM170 45h14v14h-14zM189 45h8v14h-8zM220 45h12v14h-12zM234 45h14v14h-14zM260 45h4v14h-4zM267 45h3v14h-3zM304 45h5v14h-5zM323 45h10v14h-10zM361 45h6v14h-6zM384 45h8v14h-8zM406 45h17v14h-17zM437 45h4v14h-4zM458 45h6v14h-6zM489 45h3v14h-3zM499 45h6v14h-6zM511 45h3v14h-3zM535 45h10v14h-10zM558 45h6v14h-6zM580 45h6v14h-6zM95 60h4v15h-4zM102 60h12v15h-12zM145 60h6v15h-6zM155 60h5v15h-5zM170 60h6v15h-6zM194 60h10v15h-10zM209 60h10v15h-10zM223 60h5v15h-5zM236 60h17v15h-17zM263 60h12v15h-12zM283 60h8v15h-8zM304 60h12v15h-12zM338 60h6v15h-6zM378 60h5v15h-5zM413 60h4v15h-4zM426 60h3v15h-3zM432 60h6v15h-6zM458 60h10v15h-10zM470 60h3v15h-3zM502 60h10v15h-10zM531 60h6v15h-6zM541 60h8v15h-8zM554 60h5v15h-5zM562 60h4v15h-4zM575 60h11v15h-11zM98 76h3v14h-3zM105 76h5v14h-5zM116 76h5v14h-5zM129 76h6v14h-6zM147 76h4v14h-4zM155 76h12v14h-12zM172 76h6v14h-6zM245 76h12v14h-12zM279 76h10v14h-10zM292 76h10v14h-10zM370 76h8v14h-8zM424 76h14v14h-14zM452 76h12v14h-12zM472 76h8v14h-8zM510 76h8v14h-8zM530 76h12v14h-12zM122 91h17v14h-17zM144 91h17v14h-17zM175 91h8v14h-8zM190 91h12v14h-12zM205 91h8v14h-8zM216 91h12v14h-12zM231 91h17v14h-17zM262 91h4v14h-4zM272 91h8v14h-8zM294 91h17v14h-17zM345 91h3v14h-3zM380 91h10v14h-10zM393 91h14v14h-14zM427 91h6v14h-6zM438 91h6v14h-6zM460 91h12v14h-12zM474 91h4v14h-4zM496 91h6v14h-6zM523 91h5v14h-5zM544 91h6v14h-6zM557 91h12v14h-12zM572 91h6v14h-6zM96 106h10v14h-10zM115 106h6v14h-6zM128 106h5v14h-5zM138 106h12v14h-12zM156 106h17v14h-17zM185 106h10v14h-10zM205 106h5v14h-5zM219 106h10v14h-10zM263 106h5v14h-5zM275 106h8v14h-8zM293 106h4v14h-4zM303 106h6v14h-6zM337 106h6v14h-6zM357 106h8v14h-8zM377 106h4v14h-4zM385 106h14v14h-14zM405 106h8v14h-8zM416 106h3v14h-3zM422 106h14v14h-14zM445 106h8v14h-8zM466 106h6v14h-6zM487 106h14v14h-14zM526 106h14v14h-14zM562 106h8v14h-8zM577 106h8v14h-8zM88 121h12v14h-12zM109 121h14v14h-14zM135 121h3v14h-3zM146 121h3v14h-3zM157 121h10v14h-10zM171 121h5v14h-5zM191 121h17v14h-17zM211 121h3v14h-3zM217 121h17v14h-17zM238 121h14v14h-14zM257 121h14v14h-14zM274 121h12v14h-12zM316 121h6v14h-6zM355 121h12v14h-12zM386 121h8v14h-8zM398 121h17v14h-17zM421 121h14v14h-14zM439 121h3v14h-3zM446 121h14v14h-14zM486 121h4v14h-4zM495 121h6v14h-6zM508 121h14v14h-14zM525 121h3v14h-3zM567 121h5v14h-5zM583 121h3v14h-3zM94 136h4v14h-4zM105 136h3v14h-3zM110 136h12v14h-12zM124 136h3v14h-3zM131 136h5v14h-5zM153 136h3v14h-3zM170 136h17v14h-17zM199 136h14v14h-14zM218 136h3v14h-3zM228 136h17v14h-17zM249 136h5v14h-5zM258 136h4v14h-4zM285 136h12v14h-12zM305 136h10v14h-10zM334 136h10v14h-10zM350 136h3v14h-3zM357 136h5v14h-5zM397 136h5v14h-5zM428 136h6v14h-6zM438 136h10v14h-10zM452 136h8v14h-8zM473 136h14v14h-14zM503 136h6v14h-6zM518 136h17v14h-17zM557 136h5v14h-5zM566 136h3v14h-3zM88 151h10v14h-10zM102 151h12v14h-12zM117 151h14v14h-14zM165 151h10v14h-10zM183 151h5v14h-5zM194 151h14v14h-14zM247 151h4v14h-4zM258 151h5v14h-5zM270 151h3v14h-3zM277 151h8v14h-8zM304 151h12v14h-12zM342 151h4v14h-4zM348 151h14v14h-14zM378 151h3v14h-3zM386 151h6v14h-6zM396 151h8v14h-8zM439 151h14v14h-14zM456 151h14v14h-14zM478 151h8v14h-8zM488 151h5v14h-5zM508 151h6v14h-6zM518 151h17v14h-17zM538 151h8v14h-8zM556 151h14v14h-14zM92 166h4v14h-4zM119 166h6v14h-6zM142 166h12v14h-12zM160 166h10v14h-10zM182 166h8v14h-8zM193 166h8v14h-8zM207 166h8v14h-8zM236 166h17v14h-17zM256 166h4v14h-4zM269 166h17v14h-17zM291 166h14v14h-14zM309 166h6v14h-6zM323 166h8v14h-8zM344 166h4v14h-4zM353 166h10v14h-10zM392 166h10v14h-10zM405 166h4v14h-4zM416 166h17v14h-17zM464 166h8v14h-8zM480 166h6v14h-6zM502 166h12v14h-12zM528 166h14v14h-14zM554 166h3v14h-3zM561 166h3v14h-3zM569 166h8v14h-8zM585 166h5v14h-5zM104 181h10v14h-10zM135 181h5v14h-5zM146 181h6v14h-6zM159 181h5v14h-5zM167 181h10v14h-10zM207 181h17v14h-17zM227 181h12v14h-12zM256 181h14v14h-14zM306 181h10v14h-10zM325 181h10v14h-10zM354 181h5v14h-5zM363 181h3v14h-3zM370 181h3v14h-3zM386 181h5v14h-5zM395 181h14v14h-14zM417 181h10v14h-10zM431 181h10v14h-10zM444 181h3v14h-3zM452 181h3v14h-3zM479 181h14v14h-14zM506 181h6v14h-6zM534 181h17v14h-17zM559 181h12v14h-12zM574 181h5v14h-5zM89 196h4v14h-4zM109 196h3v14h-3zM155 196h17v14h-17zM176 196h3v14h-3zM184 196h12v14h-12zM208 196h8v14h-8zM219 196h10v14h-10zM231 196h4v14h-4zM256 196h4v14h-4zM275 196h6v14h-6zM297 196h5v14h-5zM335 196h6v14h-6zM353 196h6v14h-6zM361 196h8v14h-8zM400 196h4v14h-4zM416 196h8v14h-8zM436 196h3v14h-3zM451 196h4v14h-4zM467 196h5v14h-5zM479 196h3v14h-3zM484 196h5v14h-5zM498 196h14v14h-14zM515 196h6v14h-6zM526 196h8v14h-8zM558 196h5v14h-5zM107 211h14v14h-14zM126 211h8v14h-8zM142 211h5v14h-5zM150 211h17v14h-17zM188 211h5v14h-5zM252 211h8v14h-8zM267 211h6v14h-6zM281 211h3v14h-3zM290 211h10v14h-10zM308 211h14v14h-14zM326 211h17v14h-17zM353 211h17v14h-17zM400 211h17v14h-17zM423 211h3v14h-3zM455 211h10v14h-10zM479 211h14v14h-14zM514 211h6v14h-6zM523 211h4v14h-4zM531 211h12v14h-12zM562 211h10v14h-10zM88 226h12v15h-12zM106 226h5v15h-5zM116 226h10v15h-10zM131 226h4v15h-4zM139 226h6v15h-6zM157 226h3v15h-3zM181 226h17v15h-17zM218 226h17v15h-17zM250 226h10v15h-10zM263 226h6v15h-6zM273 226h4v15h-4zM297 226h3v15h-3zM305 226h17v15h-17zM336 226h12v15h-12zM351 226h12v15h-12zM389 226h6v15h-6zM428 226h4v15h-4zM444 226h6v15h-6zM465 226h12v15h-12zM485 226h10v15h-10zM553 226h3v15h-3zM567 226h8v15h-8zM581 226h6v15h-6zM92 242h8v14h-8zM104 242h10v14h-10zM128 242h10v14h-10zM165 242h3v14h-3zM207 242h10v14h-10zM241 242h10v14h-10zM256 242h8v14h-8zM323 242h5v14h-5zM341 242h4v14h-4zM380 242h12v14h-12zM433 242h14v14h-14zM477 242h4v14h-4zM486 242h5v14h-5zM495 242h14v14h-14zM548 242h5v14h-5zM570 242h6v14h-6zM89 257h6v14h-6zM108 257h12v14h-12zM156 257h10v14h-10zM173 257h10v14h-10zM204 257h5v14h-5zM221 257h8v14h-8zM233 257h6v14h-6zM263 257h17v14h-17zM296 257h14v14h-14zM313 257h5v14h-5zM335 257h10v14h-10zM348 257h10v14h-10zM362 257h12v14h-12zM391 257h6v14h-6zM405 257h3v14h-3zM423 257h17v14h-17zM450 257h6v14h-6zM481 257h6v14h-6zM507 257h3v14h-3zM555 257h5v14h-5zM564 257h12v14h-12zM92 272h17v14h-17zM112 272h12v14h-12zM133 272h3v14h-3zM138 272h3v14h-3zM145 272h6v14h-6zM170 272h14v14h-14zM187 272h3v14h-3zM208 272h6v14h-6zM226 272h4v14h-4zM241 272h17v14h-17zM265 272h5v14h-5zM272 272h8v14h-8zM283 272h5v14h-5zM294 272h3v14h-3zM304 272h12v14h-12zM322 272h14v14h-14zM353 272h14v14h-14zM371 272h10v14h-10zM386 272h12v14h-12zM425 272h6v14h-6zM440 272h17v14h-17zM460 272h8v14h-8zM478 272h10v14h-10zM511 272h3v14h-3zM521 272h6v14h-6zM536 272h4v14h-4zM559 272h4v14h-4zM580 272h3v14h-3zM98 287h12v14h-12zM119 287h10v14h-10zM131 287h12v14h-12zM160 287h14v14h-14zM205 287h10v14h-10zM235 287h12v14h-12zM260 287h6v14h-6zM270 287h12v14h-12zM303 287h17v14h-17zM337 287h10v14h-10zM353 287h6v14h-6zM362 287h14v14h-14zM383 287h10v14h-10zM419 287h8v14h-8zM437 287h12v14h-12zM452 287h10v14h-10zM465 287h14v14h-14zM488 287h14v14h-14zM515 287h10v14h-10zM561 287h6v14h-6zM91 302h12v14h-12zM136 302h4v14h-4zM156 302h14v14h-14zM180 302h8v14h-8zM194 302h17v14h-17zM215 302h8v14h-8zM237 302h5v14h-5zM263 302h14v14h-14zM313 302h3v14h-3zM340 302h8v14h-8zM404 302h4v14h-4zM417 302h14v14h-14zM436 302h12v14h-12zM489 302h17v14h-17zM512 302h10v14h-10zM536 302h6v14h-6zM546 302h6v14h-6zM573 302h5v14h-5zM587 302h1v14h-1zM109 317h8v14h-8zM121 317h5v14h-5zM132 317h4v14h-4zM200 317h12v14h-12zM229 317h4v14h-4zM273 317h5v14h-5zM284 317h14v14h-14zM321 317h3v14h-3zM333 317h12v14h-12zM353 317h8v14h-8zM383 317h4v14h-4zM407 317h10v14h-10zM442 317h3v14h-3zM454 317h5v14h-5zM533 317h5v14h-5zM545 317h6v14h-6zM557 317h17v14h-17zM97 332h10v14h-10zM138 332h4v14h-4zM152 332h17v14h-17zM192 332h6v14h-6zM216 332h17v14h-17zM254 332h14v14h-14zM273 332h3v14h-3zM282 332h12v14h-12zM308 332h4v14h-4zM317 332h5v14h-5zM339 332h4v14h-4zM353 332h10v14h-10zM373 332h10v14h-10zM404 332h3v14h-3zM417 332h3v14h-3zM423 332h17v14h-17zM464 332h10v14h-10zM499 332h5v14h-5zM525 332h3v14h-3zM546 332h12v14h-12zM566 332h12v14h-12zM581 332h4v14h-4zM90 347h17v14h-17zM120 347h17v14h-17zM141 347h5v14h-5zM165 347h4v14h-4zM182 347h6v14h-6zM199 347h5v14h-5zM227 347h6v14h-6zM243 347h17v14h-17zM272 347h12v14h-12zM297 347h8v14h-8zM309 347h12v14h-12zM359 347h8v14h-8zM369 347h12v14h-12zM395 347h17v14h-17zM418 347h8v14h-8zM458 347h14v14h-14zM479 347h6v14h-6zM496 347h10v14h-10zM510 347h12v14h-12zM526 347h6v14h-6zM537 347h17v14h-17zM89 362h17v15h-17zM110 362h17v15h-17zM133 362h6v15h-6zM143 362h12v15h-12zM166 362h5v15h-5zM174 362h12v15h-12zM192 362h17v15h-17zM219 362h10v15h-10zM236 362h4v15h-4zM245 362h17v15h-17zM278 362h12v15h-12zM297 362h3v15h-3zM308 362h6v15h-6zM335 362h17v15h-17zM358 362h6v15h-6zM382 362h8v15h-8zM416 362h6v15h-6zM432 362h10v15h-10zM452 362h4v15h-4zM465 362h5v15h-5zM478 362h10v15h-10zM505 362h8v15h-8zM518 362h4v15h-4zM538 362h6v15h-6zM558 362h12v15h-12zM575 362h3v15h-3zM95 378h10v14h-10zM108 378h12v14h-12zM144 378h4v14h-4zM152 378h5v14h-5zM182 378h3v14h-3zM192 378h12v14h-12zM236 378h8v14h-8zM250 378h8v14h-8zM266 378h10v14h-10zM281 378h17v14h-17zM305 378h17v14h-17zM357 378h12v14h-12zM372 378h3v14h-3zM379 378h6v14h-6zM402 378h8v14h-8zM412 378h17v14h-17zM441 378h8v14h-8zM464 378h5v14h-5zM477 378h3v14h-3zM502 378h10v14h-10zM518 378h10v14h-10zM541 378h4v14h-4zM553 378h17v14h-17zM587 378h1v14h-1zM96 393h4v14h-4zM109 393h5v14h-5zM122 393h8v14h-8zM160 393h5v14h-5zM195 393h12v14h-12zM221 393h10v14h-10zM248 393h10v14h-10zM269 393h6v14h-6zM283 393h14v14h-14zM311 393h17v14h-17zM339 393h17v14h-17zM359 393h12v14h-12zM374 393h12v14h-12zM397 393h14v14h-14zM414 393h5v14h-5zM430 393h3v14h-3zM443 393h8v14h-8zM466 393h10v14h-10zM489 393h4v14h-4zM507 393h6v14h-6zM525 393h8v14h-8zM554 393h6v14h-6zM580 393h5v14h-5zM100 408h12v14h-12zM115 408h17v14h-17zM135 408h8v14h-8zM151 408h3v14h-3zM159 408h4v14h-4zM191 408h14v14h-14zM214 408h3v14h-3zM231 408h14v14h-14zM257 408h12v14h-12zM278 408h4v14h-4zM296 408h5v14h-5zM326 408h5v14h-5zM339 408h14v14h-14zM366 408h8v14h-8zM384 408h4v14h-4zM397 408h17v14h-17zM424 408h10v14h-10zM443 408h5v14h-5zM451 408h14v14h-14zM484 408h14v14h-14zM501 408h17v14h-17zM525 408h6v14h-6zM549 408h6v14h-6zM574 408h14v14h-14zM105 423h6v14h-6zM115 423h8v14h-8zM128 423h5v14h-5zM137 423h4v14h-4zM154 423h14v14h-14zM172 423h8v14h-8zM193 423h4v14h-4zM214 423h8v14h-8zM226 423h8v14h-8zM251 423h4v14h-4zM259 423h10v14h-10zM287 423h17v14h-17zM310 423h6v14h-6zM321 423h3v14h-3zM329 423h17v14h-17zM357 423h8v14h-8zM368 423h6v14h-6zM403 423h17v14h-17zM434 423h3v14h-3zM440 423h10v14h-10zM456 423h17v14h-17zM478 423h14v14h-14zM504 423h5v14h-5zM513 423h14v14h-14zM537 423h3v14h-3zM571 423h6v14h-6zM98 438h10v14h-10zM112 438h3v14h-3zM127 438h5v14h-5zM144 438h6v14h-6zM161 438h12v14h-12zM180 438h8v14h-8zM192 438h8v14h-8zM204 438h12v14h-12zM220 438h10v14h-10zM234 438h6v14h-6zM258 438h3v14h-3zM270 438h17v14h-17zM313 438h10v14h-10zM331 438h5v14h-5zM352 438h12v14h-12zM368 438h10v14h-10zM393 438h17v14h-17zM454 438h4v14h-4zM472 438h3v14h-3zM479 438h3v14h-3zM492 438h12v14h-12zM528 438h12v14h-12zM546 438h8v14h-8zM586 438h3v14h-3zM112 453h10v14h-10zM127 453h3v14h-3zM147 453h10v14h-10zM171 453h14v14h-14zM197 453h17v14h-17zM223 453h3v14h-3zM269 453h10v14h-10zM285 453h8v14h-8zM299 453h8v14h-8zM317 453h6v14h-6zM382 453h8v14h-8zM401 453h10v14h-10zM418 453h10v14h-10zM431 453h3v14h-3zM440 453h3v14h-3zM447 453h14v14h-14zM464 453h6v14h-6zM476 453h6v14h-6zM488 453h17v14h-17zM519 453h5v14h-5zM541 453h17v14h-17zM563 453h4v14h-4zM571 453h6v14h-6z"/><path fill="#a0506c" d="M150 0h4v14h-4zM133 15h3v14h-3zM152 15h2v14h-2zM499 15h3v14h-3zM269 30h5v14h-5zM107 45h2v14h-2zM126 45h4v14h-4zM207 45h4v14h-4zM453 45h5v14h-5zM167 60h3v15h-3zM331 60h3v15h-3zM395 60h4v15h-4zM289 76h3v14h-3zM173 91h2v14h-2zM202 91h3v14h-3zM407 91h3v14h-3zM424 91h3v14h-3zM506 91h3v14h-3zM555 91h2v14h-2zM569 91h3v14h-3zM413 106h3v14h-3zM456 106h4v14h-4zM554 106h5v14h-5zM167 121h4v14h-4zM176 121h5v14h-5zM208 121h3v14h-3zM326 121h5v14h-5zM550 121h5v14h-5zM91 136h3v14h-3zM122 136h2v14h-2zM245 136h4v14h-4zM254 136h4v14h-4zM462 136h3v14h-3zM470 136h3v14h-3zM552 136h5v14h-5zM137 151h5v14h-5zM151 151h5v14h-5zM226 151h3v14h-3zM505 151h3v14h-3zM514 151h4v14h-4zM105 166h3v14h-3zM266 166h3v14h-3zM340 166h4v14h-4zM380 166h2v14h-2zM433 166h3v14h-3zM164 181h3v14h-3zM239 181h4v14h-4zM376 181h5v14h-5zM455 181h5v14h-5zM527 181h3v14h-3zM103 196h3v14h-3zM141 196h5v14h-5zM149 196h3v14h-3zM181 196h3v14h-3zM408 196h3v14h-3zM457 196h3v14h-3zM482 196h2v14h-2zM98 211h3v14h-3zM529 211h2v14h-2zM497 226h4v15h-4zM279 242h2v14h-2zM407 242h3v14h-3zM429 242h4v14h-4zM310 257h3v14h-3zM345 257h3v14h-3zM443 257h3v14h-3zM466 257h3v14h-3zM497 257h4v14h-4zM560 257h4v14h-4zM263 272h2v14h-2zM457 272h3v14h-3zM496 272h3v14h-3zM527 272h5v14h-5zM257 287h3v14h-3zM435 287h2v14h-2zM558 287h3v14h-3zM581 287h2v14h-2zM88 302h3v14h-3zM175 302h5v14h-5zM277 302h3v14h-3zM305 302h4v14h-4zM357 302h3v14h-3zM493 317h4v14h-4zM540 317h2v14h-2zM298 332h5v14h-5zM420 332h3v14h-3zM450 332h5v14h-5zM158 347h3v14h-3zM390 347h2v14h-2zM581 347h5v14h-5zM229 362h3v15h-3zM392 362h3v15h-3zM470 362h4v15h-4zM120 378h5v14h-5zM157 378h3v14h-3zM263 378h3v14h-3zM349 378h5v14h-5zM545 378h2v14h-2zM89 393h3v14h-3zM331 393h4v14h-4zM371 393h3v14h-3zM436 393h5v14h-5zM254 408h3v14h-3zM334 408h5v14h-5zM374 408h4v14h-4zM123 423h3v14h-3zM147 423h3v14h-3zM211 423h3v14h-3zM346 423h3v14h-3zM355 423h2v14h-2zM365 423h3v14h-3zM564 423h3v14h-3zM328 438h3v14h-3zM469 438h3v14h-3zM185 453h4v14h-4zM194 453h3v14h-3zM235 453h4v14h-4zM293 453h4v14h-4zM332 453h5v14h-5zM398 453h3v14h-3z"/><path fill="#4048a8" d="M293 0h3v14h-3zM264 166h2v14h-2zM460 302h4v14h-4zM544 362h3v15h-3zM437 423h3v14h-3zM310 438h3v14h-3z"/><path fill="#78a658" d="M587 0h252v14h-252zM587 15h252v14h-252zM587 30h252v14h-252zM586 45h253v14h-253zM586 60h253v15h-253zM586 76h253v14h-253zM586 91h253v14h-253zM588 106h251v14h-251zM592 121h247v14h-247zM588 136h251v14h-251zM588 151h251v14h-251zM590 166h249v14h-249zM588 181h251v14h-251zM592 196h247v14h-247zM588 211h251v14h-251zM589 226h250v15h-250zM590 242h249v14h-249zM590 257h249v14h-249zM591 272h248v14h-248zM586 287h253v14h-253zM591 302h248v14h-248zM590 317h249v14h-249zM588 332h251v14h-251zM590 347h249v14h-249zM588 362h251v15h-251zM588 378h251v14h-251zM589 393h250v14h-250zM589 408h250v14h-250zM590 423h249v14h-249zM589 438h250v14h-250zM592 453h247v14h-247z"/><path fill="#6aa428" d="M584 15h3v14h-3zM0 76h94v14h-94zM581 76h5v14h-5zM94 76h4v14h-4zM101 76h2v14h-2zM167 76h5v14h-5zM182 76h3v14h-3zM191 76h4v14h-4zM213 76h3v14h-3zM236 76h3v14h-3zM322 76h4v14h-4zM345 76h4v14h-4zM365 76h5v14h-5zM378 76h5v14h-5zM389 76h2v14h-2zM409 76h2v14h-2zM464 76h2v14h-2zM492 76h4v14h-4zM499 76h3v14h-3zM507 76h3v14h-3zM549 76h5v14h-5zM573 76h3v14h-3zM585 106h3v14h-3zM588 121h4v14h-4zM583 136h5v14h-5zM583 151h5v14h-5zM584 211h4v14h-4zM586 257h4v14h-4zM588 272h3v14h-3zM583 287h3v14h-3zM588 302h3v14h-3zM0 317h97v14h-97zM587 317h3v14h-3zM152 317h4v14h-4zM170 317h4v14h-4zM233 317h5v14h-5zM247 317h2v14h-2zM263 317h5v14h-5zM302 317h5v14h-5zM316 317h5v14h-5zM324 317h4v14h-4zM348 317h3v14h-3zM366 317h5v14h-5zM387 317h2v14h-2zM403 317h4v14h-4zM445 317h3v14h-3zM469 317h5v14h-5zM527 317h3v14h-3zM574 317h3v14h-3zM581 317h3v14h-3zM585 332h3v14h-3zM586 347h4v14h-4zM583 362h5v15h-5zM585 393h4v14h-4zM585 423h5v14h-5zM588 453h4v14h-4z"/><path fill="#2a962a" d="M273 15h4v14h-4zM573 30h2v14h-2zM399 60h2v15h-2zM394 76h5v14h-5zM518 76h4v14h-4zM557 76h4v14h-4zM566 76h3v14h-3zM501 257h3v14h-3z"/><path fill="#2f7f8a" d="M554 15h5v14h-5zM566 30h4v14h-4zM371 60h2v15h-2zM327 91h5v14h-5zM376 136h5v14h-5zM402 136h5v14h-5zM381 196h5v14h-5zM300 211h4v14h-4zM543 211h5v14h-5zM381 302h4v14h-4zM411 302h3v14h-3zM322 332h4v14h-4zM451 393h3v14h-3zM484 393h3v14h-3zM522 408h3v14h-3z"/><path fill="#2a2a2a" d="M88 106h3v14h-3zM435 121h4v14h-4zM587 181h1v14h-1zM193 272h3v14h-3zM543 332h3v14h-3zM475 438h2v14h-2z"/><path fill="#9aa0bc" d="M235 151h3v14h-3zM442 226h2v15h-2zM331 317h2v14h-2zM244 378h2v14h-2zM448 408h3v14h-3zM281 453h4v14h-4z"/><path fill="#6aa428" d="M614 0h7v14h-7zM772 15h1v14h-1zM617 30h7v14h-7zM772 45h1v14h-1zM616 60h7v15h-7zM615 76h7v14h-7zM617 91h6v14h-6zM674 91h1v14h-1zM726 91h2v14h-2zM617 106h7v14h-7zM749 106h1v14h-1zM618 121h7v14h-7zM776 121h1v14h-1zM617 136h7v14h-7zM675 136h1v14h-1zM618 151h7v14h-7zM676 151h1v14h-1zM614 166h11v14h-11zM620 181h6v14h-6zM651 181h1v14h-1zM619 196h7v14h-7zM752 196h1v14h-1zM616 211h12v14h-12zM615 226h12v15h-12zM615 242h7v14h-7zM798 242h1v14h-1zM615 257h12v14h-12zM824 257h1v14h-1zM615 272h12v14h-12zM726 272h1v14h-1zM616 287h13v14h-13zM727 287h1v14h-1zM616 302h13v14h-13zM616 317h12v14h-12zM754 317h1v14h-1zM618 332h8v14h-8zM728 332h1v14h-1zM621 347h7v14h-7zM619 362h8v15h-8zM803 362h1v15h-1zM619 378h12v14h-12zM619 393h7v14h-7zM830 393h1v14h-1zM619 408h8v14h-8zM831 408h1v14h-1zM621 423h8v14h-8zM619 438h13v14h-13zM805 438h1v14h-1zM617 453h13v14h-13zM681 453h1v14h-1z"/><path fill="#c6c632" d="M616 15h6v14h-6zM616 45h6v14h-6zM699 76h1v14h-1zM622 242h5v14h-5zM653 317h1v14h-1zM703 332h1v14h-1zM616 347h5v14h-5zM626 393h6v14h-6zM704 408h1v14h-1zM782 453h1v14h-1z"/><path fill="#a03040" d="M651 151h1v14h-1zM725 181h1v14h-1z"/><path fill="#3a4a6a" d="M614 181h6v14h-6z"/><path fill="#40b898" d="M676 226h2v15h-2zM676 272h1v14h-1z"/><path fill="#7342b6" d="M616 423h5v14h-5z"/><path fill="#eeeeee" d="M314 314h4v20h-4zM306 322h20v4h-20z"/></svg></div>

<!-- DEPTH PANEL -->
<div class="panel" style="left:12px;top:599px;width:855px;height:134px"></div>
<div class="a" style="left:13px;top:600px;width:853px;height:31px;background:#efeeed;border-bottom:1px solid #a9a7a3;border-radius:4px 4px 0 0"></div>
<div class="tab" style="left:13px;top:600px;width:106px;height:31px;background:linear-gradient(#fdfdfd,#fafafa 70%,#f0efee);border-bottom:1px solid #f0efee"></div>
<div class="tab" style="left:119px;top:600px;width:127px;height:30px;background:#ecebe9;border-radius:0"></div>
<svg class="a" style="left:16px;top:607px" width="16" height="16" viewBox="0 0 16 16">
<rect x="0" y="0" width="16" height="5" fill="#68a8e8"/>
<rect x="0" y="5" width="16" height="5" fill="#b08a50"/>
<rect x="0" y="10" width="16" height="6" fill="#b0f4b4"/>
<path d="M7 0h2.8v7h3L8.4 11 4 7h3z" fill="#000"/>
</svg>
<svg class="a" style="left:123px;top:607px" width="16" height="16" viewBox="0 0 16 16">
<rect x="0.5" y="0.5" width="15" height="15" fill="#d8c89a"/>
<rect x="0.5" y="0.5" width="3.5" height="9" fill="#0010d0"/>
<rect x="0.5" y="9.5" width="3.5" height="6" fill="#a88848"/>
<rect x="4" y="2" width="5" height="13.5" fill="#f8d820"/>
<rect x="9" y="0.5" width="6.5" height="4" fill="#0010d0"/>
<rect x="9" y="4.5" width="6.5" height="6" fill="#1a7a2a"/>
<rect x="9" y="10.5" width="6.5" height="5" fill="#b00808"/>
</svg>
<div class="t" style="left:37px;top:607px;letter-spacing:0.6px">Depth View</div>
<div class="t" style="left:143px;top:607px;letter-spacing:0.5px">Summary View</div>
<div class="a" style="left:832px;top:608px;width:10px;height:4px;border:1px solid #000;background:#fff"></div>
<div class="a" style="left:850px;top:608px;width:10px;height:10px;border:1px solid #000;border-top-width:2px;background:#fff"></div>
<div id="depth" class="a" style="left:20px;top:638px;width:839px;height:87px;background:#fff"><svg width="839" height="87" shape-rendering="crispEdges" style="display:block"><defs><pattern id="hatch" width="3" height="3" patternUnits="userSpaceOnUse"><rect width="3" height="3" fill="#78a880"/><rect x="0" y="0" width="1" height="1" fill="#aab4a4"/><rect x="1" y="1" width="1" height="1" fill="#aab4a4"/><rect x="2" y="2" width="1" height="1" fill="#aab4a4"/></pattern></defs><path fill="#12b830" d="M0 0h839v4h-839z"/><path fill="#7e8a30" d="M0 4h839v4h-839z"/><path fill="#88aa48" d="M0 8h586v4h-586z"/><path fill="#2a8a88" d="M0 12h586v5h-586z"/><path fill="#304870" d="M586 8h4v4h-4z"/><path fill="#78a858" d="M590 8h249v4h-249z"/><path fill="#6a64c0" d="M0 17h97v4h-97zM104 17h4v4h-4zM111 17h5v4h-5zM193 17h5v4h-5zM255 17h5v4h-5zM299 17h3v4h-3zM342 17h4v4h-4zM346 17h3v4h-3zM401 17h3v4h-3zM425 17h4v4h-4zM559 17h2v4h-2z"/><path fill="#68a868" d="M0 21h97v4h-97zM97 21h3v4h-3zM104 21h4v4h-4zM108 25h3v4h-3zM111 25h5v4h-5zM118 21h5v4h-5zM141 25h3v4h-3zM144 21h4v4h-4zM160 21h1v4h-1zM171 21h3v4h-3zM174 25h1v4h-1zM179 21h3v4h-3zM189 25h4v4h-4zM201 21h3v4h-3zM217 21h3v4h-3zM241 21h4v4h-4zM252 25h3v4h-3zM255 21h5v4h-5zM265 21h5v4h-5zM275 25h2v4h-2zM296 25h3v4h-3zM324 21h2v4h-2zM326 25h2v4h-2zM342 21h4v4h-4zM342 25h4v4h-4zM349 25h3v4h-3zM357 21h5v4h-5zM367 21h3v4h-3zM391 21h4v4h-4zM398 21h3v4h-3zM398 25h3v4h-3zM471 21h2v4h-2zM471 25h2v4h-2zM482 21h2v4h-2zM494 21h5v4h-5zM494 25h5v4h-5zM499 25h2v4h-2zM507 21h3v4h-3zM510 21h4v4h-4zM543 21h4v4h-4zM561 21h3v4h-3zM570 21h1v4h-1zM570 25h1v4h-1z"/><path fill="#424248" d="M0 25h97v4h-97zM138 25h3v4h-3zM158 25h2v4h-2zM161 25h5v4h-5zM171 25h3v4h-3zM213 25h4v4h-4zM217 25h3v4h-3zM229 25h1v4h-1zM241 25h4v4h-4zM260 25h5v4h-5zM286 25h5v4h-5zM367 25h3v4h-3zM379 25h5v4h-5zM391 25h4v4h-4zM395 25h3v4h-3zM401 25h3v4h-3zM411 25h3v4h-3zM460 25h4v4h-4zM487 25h2v4h-2zM547 25h5v4h-5zM552 25h4v4h-4zM559 25h2v4h-2zM568 25h2v4h-2zM580 25h3v4h-3z"/><path fill="#306078" d="M0 29h97v4h-97zM230 29h5v4h-5zM260 29h5v4h-5zM293 29h3v4h-3zM296 29h3v4h-3zM308 29h5v4h-5zM342 29h4v4h-4zM346 29h3v4h-3zM362 29h5v4h-5zM379 29h5v4h-5zM398 29h3v4h-3zM425 29h4v4h-4zM434 29h1v4h-1zM510 29h4v4h-4zM543 29h4v4h-4zM571 29h2v4h-2z"/><path fill="#7040b0" d="M0 33h97v4h-97zM101 33h3v4h-3zM111 33h5v4h-5zM127 33h2v4h-2zM160 33h1v4h-1zM179 33h3v4h-3zM201 33h3v4h-3zM207 33h2v4h-2zM255 33h5v4h-5zM299 33h3v4h-3zM349 33h3v4h-3zM367 33h3v4h-3zM398 33h3v4h-3zM401 33h3v4h-3zM439 33h5v4h-5zM464 33h4v4h-4zM476 33h3v4h-3zM523 33h4v4h-4zM527 33h5v4h-5zM564 33h4v4h-4zM570 33h1v4h-1z"/><path fill="#6aa828" d="M0 37h97v4h-97zM0 41h69v5h-69zM78 41h19v5h-19zM14 46h27v4h-27zM51 46h18v4h-18zM78 46h19v4h-19zM97 37h3v4h-3zM97 41h3v5h-3zM97 50h3v4h-3zM100 41h1v5h-1zM100 46h1v4h-1zM101 41h3v5h-3zM101 46h3v4h-3zM101 50h3v4h-3zM104 41h4v5h-4zM104 46h4v4h-4zM108 41h3v5h-3zM108 46h3v4h-3zM108 50h3v4h-3zM108 54h3v4h-3zM108 58h3v4h-3zM111 37h5v4h-5zM111 46h5v4h-5zM111 54h5v4h-5zM118 33h5v4h-5zM118 37h5v4h-5zM118 41h5v5h-5zM118 50h5v4h-5zM123 41h3v5h-3zM123 46h3v4h-3zM123 54h3v4h-3zM123 58h3v4h-3zM123 62h3v4h-3zM126 33h1v4h-1zM126 37h1v4h-1zM126 41h1v5h-1zM127 46h2v4h-2zM129 41h4v5h-4zM129 46h4v4h-4zM133 33h5v4h-5zM133 37h5v4h-5zM133 41h5v5h-5zM133 46h5v4h-5zM133 50h5v4h-5zM133 54h5v4h-5zM133 62h5v4h-5zM133 66h5v4h-5zM138 41h3v5h-3zM138 46h3v4h-3zM141 37h3v4h-3zM141 41h3v5h-3zM141 46h3v4h-3zM141 50h3v4h-3zM141 54h3v4h-3zM141 58h3v4h-3zM141 66h3v4h-3zM144 37h4v4h-4zM144 41h4v5h-4zM148 33h4v4h-4zM148 41h4v5h-4zM148 46h4v4h-4zM148 50h4v4h-4zM148 54h4v4h-4zM148 58h4v4h-4zM148 62h4v4h-4zM148 70h4v5h-4zM152 37h4v4h-4zM152 46h4v4h-4zM152 50h4v4h-4zM152 58h4v4h-4zM156 33h2v4h-2zM156 37h2v4h-2zM156 41h2v5h-2zM156 50h2v4h-2zM156 54h2v4h-2zM156 58h2v4h-2zM156 62h2v4h-2zM158 33h2v4h-2zM158 37h2v4h-2zM158 46h2v4h-2zM158 54h2v4h-2zM158 62h2v4h-2zM161 37h5v4h-5zM161 46h5v4h-5zM161 54h5v4h-5zM161 58h5v4h-5zM161 66h5v4h-5zM161 70h5v5h-5zM166 37h5v4h-5zM171 41h3v5h-3zM174 50h1v4h-1zM175 46h3v4h-3zM179 54h3v4h-3zM179 62h3v4h-3zM179 75h3v4h-3zM182 37h2v4h-2zM182 41h2v5h-2zM182 46h2v4h-2zM182 62h2v4h-2zM184 41h3v5h-3zM184 46h3v4h-3zM184 54h3v4h-3zM187 41h2v5h-2zM187 46h2v4h-2zM189 33h4v4h-4zM189 37h4v4h-4zM189 41h4v5h-4zM189 46h4v4h-4zM193 33h5v4h-5zM193 41h5v5h-5zM193 46h5v4h-5zM193 50h5v4h-5zM193 54h5v4h-5zM193 66h5v4h-5zM198 46h3v4h-3zM201 41h3v5h-3zM201 46h3v4h-3zM201 50h3v4h-3zM201 54h3v4h-3zM201 58h3v4h-3zM204 33h3v4h-3zM204 37h3v4h-3zM204 46h3v4h-3zM207 50h2v4h-2zM207 58h2v4h-2zM209 37h4v4h-4zM209 46h4v4h-4zM209 50h4v4h-4zM209 62h4v4h-4zM209 66h4v4h-4zM213 37h4v4h-4zM213 41h4v5h-4zM217 46h3v4h-3zM217 50h3v4h-3zM220 41h3v5h-3zM220 50h3v4h-3zM220 58h3v4h-3zM220 75h3v4h-3zM223 41h2v5h-2zM223 46h2v4h-2zM223 50h2v4h-2zM225 41h3v5h-3zM225 50h3v4h-3zM225 54h3v4h-3zM225 62h3v4h-3zM228 41h1v5h-1zM230 41h5v5h-5zM235 46h2v4h-2zM235 50h2v4h-2zM235 54h2v4h-2zM235 58h2v4h-2zM235 62h2v4h-2zM235 66h2v4h-2zM237 41h4v5h-4zM237 46h4v4h-4zM237 54h4v4h-4zM241 33h4v4h-4zM241 41h4v5h-4zM241 46h4v4h-4zM245 41h3v5h-3zM245 46h3v4h-3zM248 41h3v5h-3zM251 37h1v4h-1zM251 41h1v5h-1zM251 46h1v4h-1zM251 50h1v4h-1zM251 54h1v4h-1zM251 58h1v4h-1zM251 62h1v4h-1zM252 37h3v4h-3zM252 41h3v5h-3zM252 46h3v4h-3zM252 54h3v4h-3zM252 70h3v5h-3zM255 46h5v4h-5zM260 37h5v4h-5zM260 41h5v5h-5zM260 46h5v4h-5zM265 41h5v5h-5zM265 50h5v4h-5zM265 54h5v4h-5zM265 58h5v4h-5zM270 37h4v4h-4zM270 41h4v5h-4zM270 46h4v4h-4zM274 41h1v5h-1zM274 46h1v4h-1zM274 50h1v4h-1zM275 37h2v4h-2zM275 46h2v4h-2zM275 50h2v4h-2zM275 58h2v4h-2zM275 62h2v4h-2zM275 70h2v5h-2zM275 75h2v4h-2zM282 37h4v4h-4zM282 41h4v5h-4zM282 46h4v4h-4zM282 58h4v4h-4zM282 62h4v4h-4zM282 66h4v4h-4zM291 41h2v5h-2zM291 50h2v4h-2zM291 54h2v4h-2zM291 58h2v4h-2zM291 75h2v4h-2zM293 41h3v5h-3zM293 46h3v4h-3zM293 50h3v4h-3zM293 62h3v4h-3zM293 66h3v4h-3zM296 37h3v4h-3zM296 41h3v5h-3zM296 50h3v4h-3zM299 37h3v4h-3zM299 41h3v5h-3zM302 41h3v5h-3zM305 46h3v4h-3zM305 54h3v4h-3zM308 41h5v5h-5zM308 50h5v4h-5zM315 33h5v4h-5zM315 41h5v5h-5zM315 46h5v4h-5zM315 50h5v4h-5zM321 37h3v4h-3zM321 46h3v4h-3zM321 50h3v4h-3zM321 54h3v4h-3zM321 58h3v4h-3zM324 54h2v4h-2zM326 33h2v4h-2zM326 37h2v4h-2zM326 41h2v5h-2zM333 41h4v5h-4zM333 46h4v4h-4zM333 54h4v4h-4zM333 58h4v4h-4zM333 62h4v4h-4zM333 66h4v4h-4zM337 33h1v4h-1zM337 41h1v5h-1zM338 33h3v4h-3zM341 37h1v4h-1zM341 41h1v5h-1zM341 46h1v4h-1zM341 50h1v4h-1zM341 54h1v4h-1zM341 62h1v4h-1zM342 50h4v4h-4zM342 58h4v4h-4zM346 41h3v5h-3zM346 50h3v4h-3zM346 58h3v4h-3zM346 62h3v4h-3zM349 41h3v5h-3zM349 50h3v4h-3zM352 46h5v4h-5zM352 54h5v4h-5zM352 58h5v4h-5zM352 62h5v4h-5zM357 41h5v5h-5zM362 50h5v4h-5zM362 54h5v4h-5zM362 58h5v4h-5zM367 37h3v4h-3zM367 41h3v5h-3zM367 50h3v4h-3zM367 54h3v4h-3zM367 62h3v4h-3zM367 66h3v4h-3zM367 79h3v4h-3zM372 41h4v5h-4zM376 33h3v4h-3zM376 37h3v4h-3zM379 41h5v5h-5zM379 46h5v4h-5zM379 50h5v4h-5zM379 54h5v4h-5zM379 58h5v4h-5zM379 62h5v4h-5zM379 66h5v4h-5zM384 41h3v5h-3zM384 46h3v4h-3zM384 50h3v4h-3zM384 54h3v4h-3zM384 58h3v4h-3zM384 62h3v4h-3zM384 75h3v4h-3zM388 46h3v4h-3zM388 50h3v4h-3zM388 58h3v4h-3zM388 66h3v4h-3zM388 75h3v4h-3zM391 46h4v4h-4zM391 50h4v4h-4zM391 54h4v4h-4zM391 58h4v4h-4zM391 62h4v4h-4zM395 41h3v5h-3zM398 41h3v5h-3zM398 50h3v4h-3zM398 54h3v4h-3zM398 58h3v4h-3zM401 41h3v5h-3zM409 41h2v5h-2zM409 46h2v4h-2zM409 50h2v4h-2zM409 62h2v4h-2zM411 41h3v5h-3zM411 46h3v4h-3zM411 54h3v4h-3zM411 62h3v4h-3zM414 33h3v4h-3zM414 41h3v5h-3zM417 41h3v5h-3zM417 46h3v4h-3zM417 50h3v4h-3zM417 54h3v4h-3zM420 41h5v5h-5zM420 50h5v4h-5zM425 37h4v4h-4zM425 41h4v5h-4zM429 33h1v4h-1zM429 41h1v5h-1zM429 46h1v4h-1zM429 54h1v4h-1zM429 62h1v4h-1zM430 50h4v4h-4zM430 62h4v4h-4zM434 37h1v4h-1zM434 41h1v5h-1zM434 46h1v4h-1zM434 50h1v4h-1zM434 54h1v4h-1zM435 33h4v4h-4zM435 50h4v4h-4zM435 58h4v4h-4zM439 46h5v4h-5zM444 37h4v4h-4zM444 50h4v4h-4zM444 54h4v4h-4zM444 58h4v4h-4zM444 66h4v4h-4zM448 37h4v4h-4zM448 46h4v4h-4zM448 50h4v4h-4zM448 58h4v4h-4zM448 62h4v4h-4zM452 41h2v5h-2zM452 46h2v4h-2zM452 50h2v4h-2zM452 54h2v4h-2zM456 37h1v4h-1zM456 50h1v4h-1zM456 54h1v4h-1zM456 62h1v4h-1zM456 66h1v4h-1zM456 70h1v5h-1zM456 75h1v4h-1zM457 33h3v4h-3zM457 50h3v4h-3zM460 46h4v4h-4zM460 62h4v4h-4zM464 50h4v4h-4zM464 58h4v4h-4zM468 37h3v4h-3zM468 41h3v5h-3zM468 46h3v4h-3zM471 37h2v4h-2zM471 41h2v5h-2zM471 46h2v4h-2zM476 41h3v5h-3zM479 41h3v5h-3zM479 46h3v4h-3zM479 54h3v4h-3zM482 41h2v5h-2zM482 46h2v4h-2zM482 50h2v4h-2zM482 54h2v4h-2zM482 62h2v4h-2zM482 66h2v4h-2zM482 70h2v5h-2zM484 37h2v4h-2zM484 41h2v5h-2zM484 50h2v4h-2zM484 54h2v4h-2zM484 58h2v4h-2zM484 62h2v4h-2zM486 37h1v4h-1zM486 41h1v5h-1zM486 46h1v4h-1zM486 54h1v4h-1zM486 58h1v4h-1zM486 62h1v4h-1zM489 37h5v4h-5zM489 41h5v5h-5zM489 46h5v4h-5zM489 50h5v4h-5zM489 54h5v4h-5zM489 62h5v4h-5zM489 66h5v4h-5zM489 70h5v5h-5zM494 33h5v4h-5zM499 46h2v4h-2zM501 41h3v5h-3zM501 54h3v4h-3zM501 62h3v4h-3zM507 37h3v4h-3zM507 41h3v5h-3zM507 46h3v4h-3zM507 54h3v4h-3zM507 58h3v4h-3zM507 62h3v4h-3zM507 70h3v5h-3zM510 46h4v4h-4zM510 54h4v4h-4zM514 46h4v4h-4zM514 50h4v4h-4zM514 54h4v4h-4zM514 58h4v4h-4zM519 46h4v4h-4zM519 54h4v4h-4zM519 58h4v4h-4zM519 62h4v4h-4zM519 66h4v4h-4zM523 37h4v4h-4zM523 41h4v5h-4zM527 41h5v5h-5zM532 33h4v4h-4zM532 41h4v5h-4zM532 46h4v4h-4zM532 50h4v4h-4zM532 54h4v4h-4zM532 75h4v4h-4zM532 79h4v4h-4zM536 37h4v4h-4zM536 41h4v5h-4zM536 50h4v4h-4zM543 37h4v4h-4zM543 41h4v5h-4zM543 46h4v4h-4zM552 37h4v4h-4zM552 41h4v5h-4zM556 37h3v4h-3zM556 41h3v5h-3zM556 46h3v4h-3zM556 50h3v4h-3zM556 62h3v4h-3zM559 41h2v5h-2zM561 41h3v5h-3zM564 41h4v5h-4zM564 50h4v4h-4zM564 54h4v4h-4zM564 58h4v4h-4zM564 62h4v4h-4zM564 70h4v5h-4zM564 75h4v4h-4zM568 46h2v4h-2zM571 46h2v4h-2zM571 58h2v4h-2zM571 62h2v4h-2zM571 66h2v4h-2zM573 37h2v4h-2zM573 46h2v4h-2zM573 50h2v4h-2zM573 54h2v4h-2zM573 62h2v4h-2zM575 50h5v4h-5zM575 58h5v4h-5zM580 37h3v4h-3zM580 41h3v5h-3zM580 50h3v4h-3zM580 54h3v4h-3zM583 46h2v4h-2zM583 50h2v4h-2zM585 37h1v4h-1zM585 41h1v5h-1zM585 46h1v4h-1zM585 54h1v4h-1z"/><path fill="#c8c832" d="M0 46h14v4h-14zM111 41h5v5h-5zM133 58h5v4h-5zM144 46h4v4h-4zM152 41h4v5h-4zM158 58h2v4h-2zM161 41h5v5h-5zM175 41h3v5h-3zM179 58h3v4h-3zM179 70h3v5h-3zM182 50h2v4h-2zM193 58h5v4h-5zM207 41h2v5h-2zM207 46h2v4h-2zM209 54h4v4h-4zM217 41h3v5h-3zM220 62h3v4h-3zM220 66h3v4h-3zM237 50h4v4h-4zM252 58h3v4h-3zM252 62h3v4h-3zM274 58h1v4h-1zM286 41h5v5h-5zM291 46h2v4h-2zM291 66h2v4h-2zM293 70h3v5h-3zM296 46h3v4h-3zM299 46h3v4h-3zM305 50h3v4h-3zM308 46h5v4h-5zM328 41h5v5h-5zM342 46h4v4h-4zM342 54h4v4h-4zM346 66h3v4h-3zM349 46h3v4h-3zM352 41h5v5h-5zM362 41h5v5h-5zM362 46h5v4h-5zM367 46h3v4h-3zM384 66h3v4h-3zM388 54h3v4h-3zM388 70h3v5h-3zM398 46h3v4h-3zM429 50h1v4h-1zM430 54h4v4h-4zM435 54h4v4h-4zM439 50h5v4h-5zM444 46h4v4h-4zM444 62h4v4h-4zM448 54h4v4h-4zM456 46h1v4h-1zM464 41h4v5h-4zM464 54h4v4h-4zM482 58h2v4h-2zM484 46h2v4h-2zM489 58h5v4h-5zM499 41h2v5h-2zM507 50h3v4h-3zM510 37h4v4h-4zM514 41h4v5h-4zM519 50h4v4h-4zM523 46h4v4h-4zM532 58h4v4h-4zM532 66h4v4h-4zM532 70h4v5h-4zM536 46h4v4h-4zM547 41h5v5h-5zM559 46h2v4h-2zM564 46h4v4h-4zM568 41h2v5h-2zM571 50h2v4h-2zM573 41h2v5h-2zM573 58h2v4h-2zM575 41h5v5h-5zM580 46h3v4h-3zM583 41h2v5h-2z"/><path fill="#c8104c" d="M97 17h3v4h-3zM100 17h1v4h-1zM101 17h3v4h-3zM108 17h3v4h-3zM118 17h5v4h-5zM123 17h3v4h-3zM126 17h1v4h-1zM127 17h2v4h-2zM129 17h4v4h-4zM133 17h5v4h-5zM138 17h3v4h-3zM141 17h3v4h-3zM144 17h4v4h-4zM148 17h4v4h-4zM152 17h4v4h-4zM156 17h2v4h-2zM158 17h2v4h-2zM160 17h1v4h-1zM161 17h5v4h-5zM166 17h5v4h-5zM171 17h3v4h-3zM174 17h1v4h-1zM175 17h3v4h-3zM179 17h3v4h-3zM182 17h2v4h-2zM184 17h3v4h-3zM187 17h2v4h-2zM189 17h4v4h-4zM198 17h3v4h-3zM201 17h3v4h-3zM204 17h3v4h-3zM207 17h2v4h-2zM209 17h4v4h-4zM213 17h4v4h-4zM217 17h3v4h-3zM220 17h3v4h-3zM223 17h2v4h-2zM225 17h3v4h-3zM228 17h1v4h-1zM229 17h1v4h-1zM230 17h5v4h-5zM237 17h4v4h-4zM241 17h4v4h-4zM245 17h3v4h-3zM248 17h3v4h-3zM251 17h1v4h-1zM252 17h3v4h-3zM260 17h5v4h-5zM265 17h5v4h-5zM270 17h4v4h-4zM274 17h1v4h-1zM275 17h2v4h-2zM282 17h4v4h-4zM286 17h5v4h-5zM291 17h2v4h-2zM293 17h3v4h-3zM296 17h3v4h-3zM302 17h3v4h-3zM305 17h3v4h-3zM308 17h5v4h-5zM315 17h5v4h-5zM321 17h3v4h-3zM324 17h2v4h-2zM326 17h2v4h-2zM333 17h4v4h-4zM337 17h1v4h-1zM338 17h3v4h-3zM349 17h3v4h-3zM352 17h5v4h-5zM357 17h5v4h-5zM362 17h5v4h-5zM367 17h3v4h-3zM372 17h4v4h-4zM376 17h3v4h-3zM379 17h5v4h-5zM384 17h3v4h-3zM388 17h3v4h-3zM391 17h4v4h-4zM395 17h3v4h-3zM398 17h3v4h-3zM404 17h5v4h-5zM409 17h2v4h-2zM411 17h3v4h-3zM414 17h3v4h-3zM417 17h3v4h-3zM420 17h5v4h-5zM429 17h1v4h-1zM430 17h4v4h-4zM434 17h1v4h-1zM435 17h4v4h-4zM439 17h5v4h-5zM444 17h4v4h-4zM448 17h4v4h-4zM452 17h2v4h-2zM456 17h1v4h-1zM457 17h3v4h-3zM460 17h4v4h-4zM464 17h4v4h-4zM468 17h3v4h-3zM471 17h2v4h-2zM476 17h3v4h-3zM479 17h3v4h-3zM482 17h2v4h-2zM484 17h2v4h-2zM486 17h1v4h-1zM487 17h2v4h-2zM489 17h5v4h-5zM494 17h5v4h-5zM499 17h2v4h-2zM501 17h3v4h-3zM507 17h3v4h-3zM510 17h4v4h-4zM514 17h4v4h-4zM518 17h1v4h-1zM519 17h4v4h-4zM523 17h4v4h-4zM527 17h5v4h-5zM532 17h4v4h-4zM536 17h4v4h-4zM543 17h4v4h-4zM547 17h5v4h-5zM552 17h4v4h-4zM556 17h3v4h-3zM561 17h3v4h-3zM564 17h4v4h-4zM568 17h2v4h-2zM570 17h1v4h-1zM571 17h2v4h-2zM573 17h2v4h-2zM575 17h5v4h-5zM580 17h3v4h-3zM583 17h2v4h-2zM585 17h1v4h-1z"/><path fill="#a06a58" d="M97 25h3v4h-3zM100 25h1v4h-1zM101 25h3v4h-3zM104 25h4v4h-4zM118 25h5v4h-5zM123 25h3v4h-3zM126 25h1v4h-1zM127 25h2v4h-2zM129 25h4v4h-4zM133 25h5v4h-5zM144 25h4v4h-4zM148 25h4v4h-4zM152 25h4v4h-4zM156 25h2v4h-2zM160 25h1v4h-1zM166 25h5v4h-5zM175 25h3v4h-3zM179 25h3v4h-3zM182 25h2v4h-2zM184 25h3v4h-3zM187 25h2v4h-2zM193 25h5v4h-5zM198 25h3v4h-3zM201 25h3v4h-3zM204 25h3v4h-3zM207 25h2v4h-2zM209 25h4v4h-4zM220 25h3v4h-3zM223 25h2v4h-2zM225 25h3v4h-3zM228 25h1v4h-1zM230 25h5v4h-5zM235 25h2v4h-2zM237 25h4v4h-4zM245 25h3v4h-3zM248 25h3v4h-3zM251 25h1v4h-1zM255 25h5v4h-5zM265 25h5v4h-5zM270 25h4v4h-4zM274 25h1v4h-1zM282 25h4v4h-4zM291 25h2v4h-2zM293 25h3v4h-3zM299 25h3v4h-3zM302 25h3v4h-3zM305 25h3v4h-3zM308 25h5v4h-5zM315 25h5v4h-5zM321 25h3v4h-3zM324 25h2v4h-2zM328 25h5v4h-5zM333 25h4v4h-4zM337 25h1v4h-1zM338 25h3v4h-3zM341 25h1v4h-1zM346 25h3v4h-3zM352 25h5v4h-5zM357 25h5v4h-5zM362 25h5v4h-5zM372 25h4v4h-4zM376 25h3v4h-3zM384 25h3v4h-3zM388 25h3v4h-3zM404 25h5v4h-5zM409 25h2v4h-2zM414 25h3v4h-3zM417 25h3v4h-3zM420 25h5v4h-5zM425 25h4v4h-4zM429 25h1v4h-1zM430 25h4v4h-4zM434 25h1v4h-1zM435 25h4v4h-4zM439 25h5v4h-5zM444 25h4v4h-4zM448 25h4v4h-4zM452 25h2v4h-2zM456 25h1v4h-1zM457 25h3v4h-3zM464 25h4v4h-4zM468 25h3v4h-3zM476 25h3v4h-3zM479 25h3v4h-3zM482 25h2v4h-2zM484 25h2v4h-2zM486 25h1v4h-1zM489 25h5v4h-5zM501 25h3v4h-3zM507 25h3v4h-3zM510 25h4v4h-4zM514 25h4v4h-4zM518 25h1v4h-1zM519 25h4v4h-4zM523 25h4v4h-4zM527 25h5v4h-5zM532 25h4v4h-4zM536 25h4v4h-4zM543 25h4v4h-4zM556 25h3v4h-3zM561 25h3v4h-3zM564 25h4v4h-4zM571 25h2v4h-2zM573 25h2v4h-2zM575 25h5v4h-5zM583 25h2v4h-2zM585 25h1v4h-1z"/><path fill="#6048c0" d="M97 29h3v4h-3zM126 29h1v4h-1zM129 29h4v4h-4zM156 29h2v4h-2zM166 29h5v4h-5zM171 29h3v4h-3zM193 29h5v4h-5zM207 29h2v4h-2zM217 29h3v4h-3zM229 29h1v4h-1zM245 29h3v4h-3zM251 29h1v4h-1zM282 29h4v4h-4zM286 29h5v4h-5zM302 29h3v4h-3zM321 29h3v4h-3zM324 29h2v4h-2zM384 29h3v4h-3zM391 29h4v4h-4zM395 29h3v4h-3zM420 29h5v4h-5zM452 29h2v4h-2zM456 29h1v4h-1zM457 29h3v4h-3zM479 29h3v4h-3zM484 29h2v4h-2zM486 29h1v4h-1zM527 29h5v4h-5zM556 29h3v4h-3zM564 29h4v4h-4zM568 29h2v4h-2zM573 29h2v4h-2zM580 29h3v4h-3zM583 29h2v4h-2zM585 29h1v4h-1z"/><path fill="#a01e7c" d="M97 33h3v4h-3zM100 33h1v4h-1zM108 33h3v4h-3zM129 33h4v4h-4zM138 33h3v4h-3zM141 33h3v4h-3zM144 33h4v4h-4zM152 33h4v4h-4zM161 33h5v4h-5zM171 33h3v4h-3zM182 33h2v4h-2zM184 33h3v4h-3zM187 33h2v4h-2zM209 33h4v4h-4zM223 33h2v4h-2zM228 33h1v4h-1zM230 33h5v4h-5zM237 33h4v4h-4zM245 33h3v4h-3zM248 33h3v4h-3zM251 33h1v4h-1zM265 33h5v4h-5zM270 33h4v4h-4zM274 33h1v4h-1zM282 33h4v4h-4zM291 33h2v4h-2zM293 33h3v4h-3zM305 33h3v4h-3zM321 33h3v4h-3zM328 33h5v4h-5zM333 33h4v4h-4zM341 33h1v4h-1zM346 33h3v4h-3zM352 33h5v4h-5zM357 33h5v4h-5zM362 33h5v4h-5zM372 33h4v4h-4zM379 33h5v4h-5zM388 33h3v4h-3zM391 33h4v4h-4zM395 33h3v4h-3zM409 33h2v4h-2zM411 33h3v4h-3zM420 33h5v4h-5zM425 33h4v4h-4zM444 33h4v4h-4zM448 33h4v4h-4zM456 33h1v4h-1zM460 33h4v4h-4zM468 33h3v4h-3zM471 33h2v4h-2zM479 33h3v4h-3zM482 33h2v4h-2zM489 33h5v4h-5zM499 33h2v4h-2zM501 33h3v4h-3zM507 33h3v4h-3zM510 33h4v4h-4zM519 33h4v4h-4zM536 33h4v4h-4zM561 33h3v4h-3zM568 33h2v4h-2zM580 33h3v4h-3zM583 33h2v4h-2z"/><path fill="#b88a78" d="M97 46h3v4h-3zM123 50h3v4h-3zM127 41h2v5h-2zM158 41h2v5h-2zM158 50h2v4h-2zM161 62h5v4h-5zM166 41h5v5h-5zM174 41h1v5h-1zM174 46h1v4h-1zM174 54h1v4h-1zM179 50h3v4h-3zM179 66h3v4h-3zM204 41h3v5h-3zM209 58h4v4h-4zM220 54h3v4h-3zM229 41h1v5h-1zM235 41h2v5h-2zM255 41h5v5h-5zM265 46h5v4h-5zM274 54h1v4h-1zM275 41h2v5h-2zM275 54h2v4h-2zM275 66h2v4h-2zM282 50h4v4h-4zM291 62h2v4h-2zM293 54h3v4h-3zM293 58h3v4h-3zM299 50h3v4h-3zM299 54h3v4h-3zM321 41h3v5h-3zM324 41h2v5h-2zM342 41h4v5h-4zM346 46h3v4h-3zM346 54h3v4h-3zM352 50h5v4h-5zM367 58h3v4h-3zM376 41h3v5h-3zM388 62h3v4h-3zM391 41h4v5h-4zM411 50h3v4h-3zM435 46h4v4h-4zM439 41h5v5h-5zM444 41h4v5h-4zM456 58h1v4h-1zM457 41h3v5h-3zM457 46h3v4h-3zM460 41h4v5h-4zM460 50h4v4h-4zM464 46h4v4h-4zM479 50h3v4h-3zM487 41h2v5h-2zM501 46h3v4h-3zM501 50h3v4h-3zM501 58h3v4h-3zM510 41h4v5h-4zM532 62h4v4h-4zM556 58h3v4h-3zM571 54h2v4h-2zM575 46h5v4h-5z"/><path fill="#a870c0" d="M97 54h3v4h-3zM111 50h5v4h-5zM118 54h5v4h-5zM118 58h5v4h-5zM127 50h2v4h-2zM129 50h4v4h-4zM144 54h4v4h-4zM152 54h4v4h-4zM166 46h5v4h-5zM166 50h5v4h-5zM174 58h1v4h-1zM182 54h2v4h-2zM189 50h4v4h-4zM193 62h5v4h-5zM213 46h4v4h-4zM252 66h3v4h-3zM255 50h5v4h-5zM270 50h4v4h-4zM270 54h4v4h-4zM291 70h2v5h-2zM299 58h3v4h-3zM305 58h3v4h-3zM315 54h5v4h-5zM324 46h2v4h-2zM346 70h3v5h-3zM367 70h3v5h-3zM367 75h3v4h-3zM409 54h2v4h-2zM409 58h2v4h-2zM411 58h3v4h-3zM420 46h5v4h-5zM429 58h1v4h-1zM460 54h4v4h-4zM460 58h4v4h-4zM471 50h2v4h-2zM489 75h5v4h-5zM494 46h5v4h-5zM519 70h4v5h-4zM523 50h4v4h-4zM523 54h4v4h-4zM552 46h4v4h-4zM556 66h3v4h-3zM564 66h4v4h-4zM585 50h1v4h-1z"/><path fill="#2aa02a" d="M97 58h3v4h-3zM101 54h3v4h-3zM108 62h3v4h-3zM118 62h5v4h-5zM123 66h3v4h-3zM141 62h3v4h-3zM144 58h4v4h-4zM148 66h4v4h-4zM166 54h5v4h-5zM171 46h3v4h-3zM174 62h1v4h-1zM174 66h1v4h-1zM182 58h2v4h-2zM184 50h3v4h-3zM198 50h3v4h-3zM198 54h3v4h-3zM207 54h2v4h-2zM209 70h4v5h-4zM213 50h4v4h-4zM220 70h3v5h-3zM225 58h3v4h-3zM229 46h1v4h-1zM235 70h2v5h-2zM237 58h4v4h-4zM251 66h1v4h-1zM255 54h5v4h-5zM274 62h1v4h-1zM275 79h2v4h-2zM293 75h3v4h-3zM299 62h3v4h-3zM299 66h3v4h-3zM305 62h3v4h-3zM321 62h3v4h-3zM324 50h2v4h-2zM338 46h3v4h-3zM341 66h1v4h-1zM352 66h5v4h-5zM352 70h5v5h-5zM362 62h5v4h-5zM384 70h3v5h-3zM401 46h3v4h-3zM404 46h5v4h-5zM404 50h5v4h-5zM411 66h3v4h-3zM417 58h3v4h-3zM430 58h4v4h-4zM434 58h1v4h-1zM439 54h5v4h-5zM457 54h3v4h-3zM471 54h2v4h-2zM476 46h3v4h-3zM479 58h3v4h-3zM482 75h2v4h-2zM487 46h2v4h-2zM494 50h5v4h-5zM494 54h5v4h-5zM501 66h3v4h-3zM507 66h3v4h-3zM510 50h4v4h-4zM514 62h4v4h-4zM519 75h4v4h-4zM547 46h5v4h-5zM559 50h2v4h-2zM571 70h2v5h-2zM573 66h2v4h-2zM575 54h5v4h-5zM580 58h3v4h-3zM583 54h2v4h-2z"/><path fill="#40b8a0" d="M97 62h3v4h-3zM101 58h3v4h-3zM126 46h1v4h-1zM127 54h2v4h-2zM129 54h4v4h-4zM144 62h4v4h-4zM158 66h2v4h-2zM161 75h5v4h-5zM175 50h3v4h-3zM179 79h3v4h-3zM187 50h2v4h-2zM189 54h4v4h-4zM209 75h4v4h-4zM213 54h4v4h-4zM223 54h2v4h-2zM228 46h1v4h-1zM235 75h2v4h-2zM241 50h4v4h-4zM245 50h3v4h-3zM248 46h3v4h-3zM251 70h1v5h-1zM255 58h5v4h-5zM260 50h5v4h-5zM270 58h4v4h-4zM274 66h1v4h-1zM282 70h4v5h-4zM286 46h5v4h-5zM293 79h3v4h-3zM296 54h3v4h-3zM308 54h5v4h-5zM315 58h5v4h-5zM326 46h2v4h-2zM328 46h5v4h-5zM337 46h1v4h-1zM338 50h3v4h-3zM341 70h1v5h-1zM342 62h4v4h-4zM346 75h3v4h-3zM349 54h3v4h-3zM357 46h5v4h-5zM362 66h5v4h-5zM372 46h4v4h-4zM376 46h3v4h-3zM388 79h3v4h-3zM395 46h3v4h-3zM398 62h3v4h-3zM401 50h3v4h-3zM414 46h3v4h-3zM417 62h3v4h-3zM420 54h5v4h-5zM425 46h4v4h-4zM429 66h1v4h-1zM434 62h1v4h-1zM435 62h4v4h-4zM439 58h5v4h-5zM444 70h4v5h-4zM448 66h4v4h-4zM452 58h2v4h-2zM456 79h1v4h-1zM457 58h3v4h-3zM464 62h4v4h-4zM471 58h2v4h-2zM479 62h3v4h-3zM489 79h5v4h-5zM501 70h3v5h-3zM519 79h4v4h-4zM523 58h4v4h-4zM527 46h5v4h-5zM536 54h4v4h-4zM543 50h4v4h-4zM547 50h5v4h-5zM552 50h4v4h-4zM556 70h3v5h-3zM559 54h2v4h-2zM561 46h3v4h-3zM585 58h1v4h-1z"/><path fill="url(#hatch)" d="M100 21h1v4h-1zM101 21h3v4h-3zM108 21h3v4h-3zM111 21h5v4h-5zM123 21h3v4h-3zM126 21h1v4h-1zM127 21h2v4h-2zM129 21h4v4h-4zM133 21h5v4h-5zM138 21h3v4h-3zM141 21h3v4h-3zM148 21h4v4h-4zM152 21h4v4h-4zM156 21h2v4h-2zM158 21h2v4h-2zM161 21h5v4h-5zM166 21h5v4h-5zM174 21h1v4h-1zM175 21h3v4h-3zM182 21h2v4h-2zM184 21h3v4h-3zM187 21h2v4h-2zM189 21h4v4h-4zM193 21h5v4h-5zM198 21h3v4h-3zM204 21h3v4h-3zM207 21h2v4h-2zM209 21h4v4h-4zM213 21h4v4h-4zM220 21h3v4h-3zM223 21h2v4h-2zM225 21h3v4h-3zM228 21h1v4h-1zM229 21h1v4h-1zM230 21h5v4h-5zM235 21h2v4h-2zM237 21h4v4h-4zM245 21h3v4h-3zM248 21h3v4h-3zM251 21h1v4h-1zM252 21h3v4h-3zM260 21h5v4h-5zM270 21h4v4h-4zM274 21h1v4h-1zM275 21h2v4h-2zM282 21h4v4h-4zM286 21h5v4h-5zM291 21h2v4h-2zM293 21h3v4h-3zM296 21h3v4h-3zM299 21h3v4h-3zM302 21h3v4h-3zM305 21h3v4h-3zM308 21h5v4h-5zM315 21h5v4h-5zM321 21h3v4h-3zM326 21h2v4h-2zM328 21h5v4h-5zM333 21h4v4h-4zM337 21h1v4h-1zM338 21h3v4h-3zM341 21h1v4h-1zM346 21h3v4h-3zM349 21h3v4h-3zM352 21h5v4h-5zM362 21h5v4h-5zM372 21h4v4h-4zM376 21h3v4h-3zM379 21h5v4h-5zM384 21h3v4h-3zM388 21h3v4h-3zM395 21h3v4h-3zM401 21h3v4h-3zM404 21h5v4h-5zM409 21h2v4h-2zM411 21h3v4h-3zM414 21h3v4h-3zM417 21h3v4h-3zM420 21h5v4h-5zM425 21h4v4h-4zM429 21h1v4h-1zM430 21h4v4h-4zM434 21h1v4h-1zM435 21h4v4h-4zM439 21h5v4h-5zM444 21h4v4h-4zM448 21h4v4h-4zM452 21h2v4h-2zM456 21h1v4h-1zM457 21h3v4h-3zM460 21h4v4h-4zM464 21h4v4h-4zM468 21h3v4h-3zM476 21h3v4h-3zM479 21h3v4h-3zM484 21h2v4h-2zM486 21h1v4h-1zM487 21h2v4h-2zM489 21h5v4h-5zM499 21h2v4h-2zM501 21h3v4h-3zM514 21h4v4h-4zM518 21h1v4h-1zM519 21h4v4h-4zM523 21h4v4h-4zM527 21h5v4h-5zM532 21h4v4h-4zM536 21h4v4h-4zM547 21h5v4h-5zM552 21h4v4h-4zM556 21h3v4h-3zM559 21h2v4h-2zM564 21h4v4h-4zM568 21h2v4h-2zM571 21h2v4h-2zM573 21h2v4h-2zM575 21h5v4h-5zM580 21h3v4h-3zM583 21h2v4h-2zM585 21h1v4h-1z"/><path fill="#303a20" d="M100 29h1v4h-1zM127 29h2v4h-2zM189 29h4v4h-4zM228 29h1v4h-1zM341 29h1v4h-1zM404 29h5v4h-5zM448 29h4v4h-4zM460 29h4v4h-4zM468 29h3v4h-3zM471 29h2v4h-2zM487 29h2v4h-2zM499 29h2v4h-2zM501 29h3v4h-3zM523 29h4v4h-4z"/><path fill="#30c070" d="M100 37h1v4h-1zM104 37h4v4h-4zM108 37h3v4h-3zM187 37h2v4h-2zM201 37h3v4h-3zM217 37h3v4h-3zM225 37h3v4h-3zM228 37h1v4h-1zM229 37h1v4h-1zM241 37h4v4h-4zM245 37h3v4h-3zM308 37h5v4h-5zM337 37h1v4h-1zM346 37h3v4h-3zM372 37h4v4h-4zM388 37h3v4h-3zM391 37h4v4h-4zM398 37h3v4h-3zM401 37h3v4h-3zM417 37h3v4h-3zM452 37h2v4h-2zM457 37h3v4h-3zM464 37h4v4h-4zM482 37h2v4h-2zM499 37h2v4h-2zM571 37h2v4h-2zM575 37h5v4h-5zM583 37h2v4h-2z"/><path fill="#a0a0b0" d="M101 29h3v4h-3zM104 33h4v4h-4zM111 29h5v4h-5zM182 29h2v4h-2zM217 33h3v4h-3zM225 33h3v4h-3zM305 29h3v4h-3zM308 33h5v4h-5zM324 33h2v4h-2zM328 29h5v4h-5zM337 29h1v4h-1zM352 29h5v4h-5zM411 29h3v4h-3zM430 29h4v4h-4zM439 29h5v4h-5zM507 29h3v4h-3zM514 33h4v4h-4zM518 29h1v4h-1zM536 29h4v4h-4zM543 33h4v4h-4zM547 33h5v4h-5zM552 29h4v4h-4zM570 29h1v4h-1z"/><path fill="#5f9872" d="M101 37h3v4h-3zM104 29h4v4h-4zM123 37h3v4h-3zM127 37h2v4h-2zM129 37h4v4h-4zM138 37h3v4h-3zM144 50h4v4h-4zM160 29h1v4h-1zM161 29h5v4h-5zM174 37h1v4h-1zM175 29h3v4h-3zM175 37h3v4h-3zM179 37h3v4h-3zM179 46h3v4h-3zM184 29h3v4h-3zM184 37h3v4h-3zM207 37h2v4h-2zM209 29h4v4h-4zM209 41h4v5h-4zM220 37h3v4h-3zM225 46h3v4h-3zM230 37h5v4h-5zM235 37h2v4h-2zM237 29h4v4h-4zM237 37h4v4h-4zM241 29h4v4h-4zM248 37h3v4h-3zM252 50h3v4h-3zM255 29h5v4h-5zM255 37h5v4h-5zM265 37h5v4h-5zM270 29h4v4h-4zM282 54h4v4h-4zM291 37h2v4h-2zM293 37h3v4h-3zM302 37h3v4h-3zM305 37h3v4h-3zM305 41h3v5h-3zM315 29h5v4h-5zM315 37h5v4h-5zM324 37h2v4h-2zM328 37h5v4h-5zM338 41h3v5h-3zM341 58h1v4h-1zM342 37h4v4h-4zM349 37h3v4h-3zM352 37h5v4h-5zM357 37h5v4h-5zM362 37h5v4h-5zM367 29h3v4h-3zM379 37h5v4h-5zM384 37h3v4h-3zM395 37h3v4h-3zM404 37h5v4h-5zM404 41h5v5h-5zM409 29h2v4h-2zM409 37h2v4h-2zM411 37h3v4h-3zM414 37h3v4h-3zM420 37h5v4h-5zM429 37h1v4h-1zM430 37h4v4h-4zM435 37h4v4h-4zM439 37h5v4h-5zM444 29h4v4h-4zM448 41h4v5h-4zM456 41h1v5h-1zM460 37h4v4h-4zM476 29h3v4h-3zM476 37h3v4h-3zM487 37h2v4h-2zM494 37h5v4h-5zM514 37h4v4h-4zM519 29h4v4h-4zM519 37h4v4h-4zM519 41h4v5h-4zM527 37h5v4h-5zM532 37h4v4h-4zM547 29h5v4h-5zM547 37h5v4h-5zM556 54h3v4h-3zM559 29h2v4h-2zM559 37h2v4h-2zM561 29h3v4h-3zM561 37h3v4h-3zM564 37h4v4h-4zM571 41h2v5h-2z"/><path fill="#50c060" d="M108 29h3v4h-3zM118 46h5v4h-5zM138 29h3v4h-3zM141 29h3v4h-3zM144 29h4v4h-4zM148 29h4v4h-4zM148 37h4v4h-4zM152 29h4v4h-4zM171 37h3v4h-3zM174 29h1v4h-1zM175 33h3v4h-3zM193 37h5v4h-5zM198 37h3v4h-3zM204 29h3v4h-3zM220 46h3v4h-3zM223 29h2v4h-2zM223 37h2v4h-2zM225 29h3v4h-3zM235 29h2v4h-2zM248 29h3v4h-3zM274 29h1v4h-1zM274 37h1v4h-1zM286 37h5v4h-5zM299 29h3v4h-3zM302 33h3v4h-3zM326 29h2v4h-2zM333 29h4v4h-4zM333 37h4v4h-4zM338 29h3v4h-3zM338 37h3v4h-3zM376 29h3v4h-3zM388 41h3v5h-3zM401 29h3v4h-3zM429 29h1v4h-1zM430 33h4v4h-4zM430 46h4v4h-4zM435 29h4v4h-4zM452 33h2v4h-2zM464 29h4v4h-4zM479 37h3v4h-3zM482 29h2v4h-2zM486 33h1v4h-1zM489 29h5v4h-5zM501 37h3v4h-3zM556 33h3v4h-3zM568 37h2v4h-2zM575 29h5v4h-5z"/><path fill="#904058" d="M116 17h2v4h-2zM178 17h1v4h-1zM235 17h2v4h-2zM277 17h2v4h-2zM279 17h3v4h-3zM313 17h2v4h-2zM320 17h1v4h-1zM328 17h5v4h-5zM341 17h1v4h-1zM370 17h2v4h-2zM387 17h1v4h-1zM454 17h2v4h-2zM473 17h1v4h-1zM474 17h2v4h-2zM504 17h3v4h-3zM540 17h3v4h-3z"/><path fill="#30c0b0" d="M118 29h5v4h-5zM123 29h3v4h-3zM133 29h5v4h-5zM158 29h2v4h-2zM179 29h3v4h-3zM187 29h2v4h-2zM198 29h3v4h-3zM201 29h3v4h-3zM213 29h4v4h-4zM220 29h3v4h-3zM252 29h3v4h-3zM265 29h5v4h-5zM275 29h2v4h-2zM291 29h2v4h-2zM349 29h3v4h-3zM357 29h5v4h-5zM372 29h4v4h-4zM388 29h3v4h-3zM414 29h3v4h-3zM417 29h3v4h-3zM494 29h5v4h-5zM514 29h4v4h-4zM532 29h4v4h-4z"/><path fill="#d04818" d="M123 33h3v4h-3zM166 33h5v4h-5zM174 33h1v4h-1zM198 33h3v4h-3zM213 33h4v4h-4zM220 33h3v4h-3zM229 33h1v4h-1zM235 33h2v4h-2zM252 33h3v4h-3zM260 33h5v4h-5zM275 33h2v4h-2zM286 33h5v4h-5zM296 33h3v4h-3zM342 33h4v4h-4zM384 33h3v4h-3zM404 33h5v4h-5zM417 33h3v4h-3zM434 33h1v4h-1zM484 33h2v4h-2zM487 33h2v4h-2zM518 33h1v4h-1zM552 33h4v4h-4zM559 33h2v4h-2zM571 33h2v4h-2zM573 33h2v4h-2zM575 33h5v4h-5zM585 33h1v4h-1z"/><path fill="#a06010" d="M156 46h2v4h-2zM161 50h5v4h-5zM179 41h3v5h-3zM198 41h3v5h-3zM333 50h4v4h-4zM430 41h4v5h-4zM435 41h4v5h-4zM486 50h1v4h-1zM494 41h5v5h-5z"/><path fill="#304870" d="M586 8h4v4h-4zM616 8h12v4h-12zM653 8h1v4h-1zM754 8h1v4h-1z"/><path fill="#68a868" d="M586 12h4v5h-4zM616 12h12v5h-12zM653 12h1v5h-1zM754 12h1v5h-1z"/><path fill="#424248" d="M586 17h4v4h-4zM616 17h12v4h-12zM653 17h1v4h-1zM754 17h1v4h-1z"/><path fill="#306078" d="M586 21h4v4h-4zM616 21h12v4h-12zM653 21h1v4h-1zM754 21h1v4h-1z"/><path fill="#7040b0" d="M586 25h4v4h-4zM616 25h12v4h-12zM653 25h1v4h-1zM754 25h1v4h-1z"/><path fill="#6aa828" d="M586 29h4v4h-4zM586 33h4v4h-4zM586 37h4v4h-4zM616 29h12v4h-12zM622 33h6v8h-6zM653 29h1v4h-1zM653 33h1v4h-1zM754 29h1v4h-1zM754 33h1v4h-1zM754 37h1v4h-1z"/><path fill="#c8c832" d="M653 37h1v4h-1z"/><path fill="#eeeeee" d="M314 0h4v87h-4zM306 38h20v4h-20z"/></svg></div>

<!-- CALL PATH PANEL -->
<div class="panel" style="left:870px;top:59px;width:152px;height:674px"></div>
<div class="a" style="left:871px;top:60px;width:150px;height:31px;background:#efeeed;border-bottom:1px solid #a9a7a3;border-radius:4px 4px 0 0"></div>
<div class="tab" style="left:871px;top:60px;width:86px;height:32px;background:linear-gradient(#fafafa,#f1f0ef)"></div>
<svg class="a" style="left:875px;top:66px" width="14" height="18" viewBox="0 0 14 18">
<path d="M3.5 3v12" stroke="#7a4a3a" stroke-width="1"/>
<circle cx="3.5" cy="3.2" r="2.5" fill="#70a8e8" stroke="#4070b0" stroke-width="0.6"/>
<circle cx="3.5" cy="8.7" r="2.5" fill="#0a7a30"/>
<circle cx="3.5" cy="14.5" r="2.4" fill="#c89a48" stroke="#8a7090" stroke-width="0.6"/>
<path d="M8.7 3.5h2.8v7.5h2.2L10.1 14.5 6.5 11h2.2z" fill="#000"/>
</svg>
<div class="t" style="left:894px;top:67px;letter-spacing:0.4px">Call Path</div>
<div class="a" style="left:987px;top:68px;width:10px;height:4px;border:1px solid #000;background:#fff"></div>
<div class="a" style="left:1005px;top:68px;width:10px;height:10px;border:1px solid #000;border-top-width:2px;background:#fff"></div>
<div class="a" style="left:878px;top:98px;width:120px;height:21px;background:#fff"></div>
<div class="t" style="left:880px;top:100px">9</div>
<svg class="a" style="left:1001px;top:101px" width="10" height="15" viewBox="0 0 10 15">
<path d="M1.5 5L5 1.5 8.5 5M1.5 9.5L5 13 8.5 9.5" fill="none" stroke="#000" stroke-width="1.3"/>
</svg>
<div class="a" style="left:878px;top:124px;width:136px;height:474px;background:#fff"></div>
<div class="a" style="left:878px;top:331px;width:136px;height:23px;background:#7098cc"></div>
<div class="a" style="left:878px;top:124px;width:136px;height:474px;overflow:hidden"><div class="a" style="left:2px;top:5px;width:12px;height:12px;background:#12b830"></div><div class="t" style="left:18px;top:3px">main</div><div class="a" style="left:2px;top:28px;width:12px;height:12px;background:#7e8a30"></div><div class="t" style="left:18px;top:26px">MAIN__</div><div class="a" style="left:2px;top:51px;width:12px;height:12px;background:#88aa48"></div><div class="t" style="left:18px;top:49px">pmpi_bcast_</div><div class="a" style="left:2px;top:74px;width:12px;height:12px;background:#2a8a88"></div><div class="t" style="left:18px;top:72px">PMPI_Bcast</div><div class="a" style="left:2px;top:97px;width:12px;height:12px;background:#6a64c0"></div><div class="t" style="left:18px;top:95px">intra_kBcast</div><div class="a" style="left:2px;top:120px;width:12px;height:12px;background:#68a868"></div><div class="t" style="left:18px;top:118px">PMPI_Recv</div><div class="a" style="left:2px;top:143px;width:12px;height:12px;background:#424248"></div><div class="t" style="left:18px;top:141px">MPID_RecvDatat</div><div class="a" style="left:2px;top:166px;width:12px;height:12px;background:#306078"></div><div class="t" style="left:18px;top:164px">MPID_PSM_RecvC</div><div class="a" style="left:2px;top:189px;width:12px;height:12px;background:#7040b0"></div><div class="t" style="left:18px;top:187px">MPID_PSM_Wait</div><div class="a" style="left:2px;top:212px;width:12px;height:12px;background:#6aa828"></div><div class="t" style="left:18px;top:210px;color:#fff">psmi_timer_cance</div><div class="a" style="left:2px;top:235px;width:12px;height:12px;background:#6aa828"></div><div class="t" style="left:18px;top:233px">psmi_timer_cance</div><div class="a" style="left:2px;top:258px;width:12px;height:12px;background:#6aa828"></div><div class="t" style="left:18px;top:256px">psmi_timer_cance</div><div class="a" style="left:2px;top:281px;width:12px;height:12px;background:#6aa828"></div><div class="t" style="left:18px;top:279px">psmi_timer_cance</div><div class="a" style="left:2px;top:304px;width:12px;height:12px;background:#6aa828"></div><div class="t" style="left:18px;top:302px">psmi_timer_cance</div><div class="a" style="left:2px;top:327px;width:12px;height:12px;background:#6aa828"></div><div class="t" style="left:18px;top:325px">psmi_timer_cance</div><div class="a" style="left:2px;top:350px;width:12px;height:12px;background:#2aa02a"></div><div class="t" style="left:18px;top:348px">psmi_mq_mtucpy</div><div class="a" style="left:2px;top:373px;width:12px;height:12px;background:#40b898"></div><div class="t" style="left:18px;top:371px">ipath_dwordcpy</div></div>
<div class="t" style="left:879px;top:603px">Mini Map</div>
<div class="a" style="left:878px;top:625px;width:136px;height:100px;background:#808080"></div>
<div class="a" style="left:878px;top:667px;width:21px;height:49px;background:#fff"></div>

<!-- STATUS BAR -->
<div class="a" style="left:861px;top:737px;width:3px;height:29px;border-left:2px solid #fff;border-right:1px solid #a9a7a3;border-bottom:1px solid #a9a7a3"></div>
<div class="a" style="left:867px;top:735px;width:144px;height:32px;border-left:1px solid #a9a7a3;border-top:1px solid #a9a7a3;border-right:1px solid #a9a7a3;border-bottom:1px solid #fbfbfb"></div>
<div class="a" style="left:868px;top:736px;width:25px;height:30px;background:#e6f1fb;border-right:1px solid #a9a7a3"></div>
<div class="a" style="left:1011px;top:735px;width:14px;height:1px;background:#a9a7a3"></div>
<div class="t" style="left:905px;top:742px">6M of 34M</div>
<svg class="a" style="left:1011px;top:742px" width="14" height="17" viewBox="0 0 14 17">
<path d="M1 3.5h12" stroke="#2a70c0" stroke-width="1.6"/>
<rect x="5" y="1" width="4" height="2" fill="#2a70c0"/>
<path d="M2.5 5h9l-1 11h-7z" fill="#d8e89a" stroke="#1a60b0" stroke-width="1.2"/>
<path d="M5.2 6v9M8.8 6v9" stroke="#2a70c0" stroke-width="1.2"/>
</svg>
</body></html>
